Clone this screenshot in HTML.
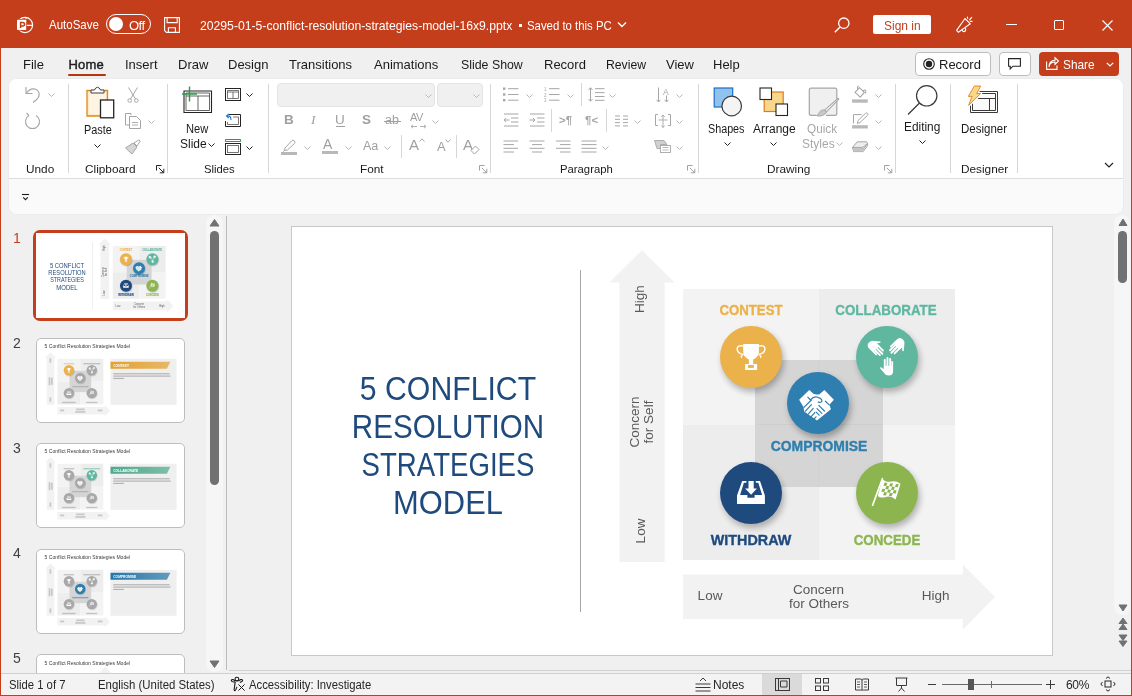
<!DOCTYPE html>
<html><head><meta charset="utf-8">
<style>
*{box-sizing:border-box}
html,body{margin:0;padding:0}
body{width:1132px;height:696px;overflow:hidden;position:relative;background:#F0F0F0;font-family:"Liberation Sans",sans-serif;color:#242424}
.a{position:absolute}
.t{position:absolute;white-space:nowrap;line-height:1}
svg{position:absolute;overflow:visible}
#root{position:absolute;left:0;top:0;width:1132px;height:696px;will-change:transform}
</style></head><body><div id="root">
<!-- TITLE BAR -->
<div class="a" style="left:0;top:0;width:1132px;height:48px;background:#C43E1C"></div>
<div class="a" style="left:0;top:48px;width:1px;height:648px;background:#C43E1C"></div>
<div class="a" style="left:1131px;top:48px;width:1px;height:648px;background:#C43E1C"></div>
<div class="a" style="left:0;top:695px;width:1132px;height:1px;background:#C43E1C"></div>
<!-- ppt logo -->
<svg style="left:12px;top:12px" width="26" height="26" viewBox="0 0 26 26"><circle cx="13" cy="13" r="7.6" fill="none" stroke="#fff" stroke-width="1.2"/><path d="M14 5.4 V13.4 H20.6" fill="none" stroke="#fff" stroke-width="1.2"/><rect x="4.3" y="7" width="10.6" height="11.6" fill="#C43E1C"/><rect x="5" y="7.7" width="9.2" height="10.2" rx="0.6" fill="#fff"/><path d="M8.6 15.9 V10.5 H10.6 Q12.6 10.5 12.6 12.3 Q12.6 14 10.6 14 H8.6" fill="none" stroke="#C43E1C" stroke-width="1.5"/></svg>
<div class="t" style="left:49px;top:18px;font-size:13px;color:#fff;transform:scaleX(0.885);transform-origin:0 0">AutoSave</div>
<div class="a" style="left:106px;top:14px;width:45px;height:20px;border:1.3px solid #fff;border-radius:10px"></div>
<div class="a" style="left:109px;top:17px;width:14px;height:14px;background:#fff;border-radius:50%"></div>
<div class="t" style="left:129px;top:18.5px;font-size:13px;color:#fff;letter-spacing:-0.5px">Off</div>
<svg style="left:164px;top:17px" width="16" height="16" viewBox="0 0 16 16"><path d="M0.6 0.6 H15.4 V15.4 H2.4 L0.6 13.6 Z" fill="none" stroke="#fff" stroke-width="1.1"/><path d="M3.1 0.6 V5.6 H13.2 V0.6 M4.4 15.4 V10.8 H11.4 V15.4" fill="none" stroke="#fff" stroke-width="1.1"/></svg>
<div class="t" style="left:200px;top:19.8px;font-size:12.2px;color:#fff">20295-01-5-conflict-resolution-strategies-model-16x9.pptx</div>
<div class="a" style="left:519px;top:24px;width:3px;height:3px;background:#fff"></div>
<div class="t" style="left:527px;top:19px;font-size:13px;color:#fff;transform:scaleX(0.875);transform-origin:0 0">Saved to this PC</div>
<svg style="left:617px;top:21px" width="10" height="7" viewBox="0 0 10 7"><path d="M1 1.5 L5 5.5 L9 1.5" fill="none" stroke="#fff" stroke-width="1.4"/></svg>
<!-- search -->
<svg style="left:834px;top:17px" width="16" height="16" viewBox="0 0 16 16"><circle cx="9.8" cy="6.2" r="5.2" fill="none" stroke="#fff" stroke-width="1.3"/><path d="M6.1 9.9 L0.8 15.2" stroke="#fff" stroke-width="1.4"/></svg>
<div class="a" style="left:873px;top:15px;width:58px;height:19px;background:#fff;border-radius:2px"></div>
<div class="t" style="left:884px;top:19px;font-size:13px;color:#C43E1C;transform:scaleX(0.92);transform-origin:0 0">Sign in</div>
<!-- megaphone/pen -->
<svg style="left:950px;top:10px" width="30" height="30" viewBox="0 0 30 30"><path d="M6.6 20.4 L15 8.5 L20.3 13.8 L8.4 22.3 Z" fill="none" stroke="#fff" stroke-width="1.1" stroke-linejoin="round"/><path d="M12.3 19.6 Q12.6 22.2 14.6 21.4 Q16.2 20.6 15.6 18" fill="none" stroke="#fff" stroke-width="1.1"/><path d="M17.4 7 L17.7 8.5 M19.6 9.8 L21.7 7.4 M20.4 11.4 L22 11.4" stroke="#fff" stroke-width="1.1" stroke-linecap="round"/></svg>
<div class="a" style="left:1006px;top:24px;width:11px;height:1px;background:#fff"></div>
<div class="a" style="left:1054px;top:20px;width:10px;height:10px;border:1px solid #fff;border-radius:1px"></div>
<svg style="left:1102px;top:20px" width="11" height="11" viewBox="0 0 11 11"><path d="M0.5 0.5 L10.5 10.5 M10.5 0.5 L0.5 10.5" stroke="#fff" stroke-width="1.1"/></svg>

<!-- TABS -->
<div class="t" style="left:23px;top:58px;font-size:13px;color:#1A1A1A">File</div>
<div class="t" style="left:68.5px;top:58px;font-size:13px;color:#1A1A1A;font-weight:400;-webkit-text-stroke:0.45px #242424;letter-spacing:0.15px">Home</div>
<div class="a" style="left:68px;top:74px;width:38px;height:2.2px;background:#B8360F;border-radius:1px"></div>
<div class="t" style="left:125px;top:58px;font-size:13px;color:#1A1A1A">Insert</div>
<div class="t" style="left:178px;top:58px;font-size:13px;color:#1A1A1A">Draw</div>
<div class="t" style="left:228px;top:58px;font-size:13px;color:#1A1A1A">Design</div>
<div class="t" style="left:289px;top:58px;font-size:13px;color:#1A1A1A">Transitions</div>
<div class="t" style="left:374px;top:58px;font-size:13px;color:#1A1A1A">Animations</div>
<div class="t" style="left:461px;top:58px;font-size:13px;color:#1A1A1A;transform:scaleX(0.95);transform-origin:0 0">Slide Show</div>
<div class="t" style="left:544px;top:58px;font-size:13px;color:#1A1A1A">Record</div>
<div class="t" style="left:606px;top:58px;font-size:13px;color:#1A1A1A;transform:scaleX(0.94);transform-origin:0 0">Review</div>
<div class="t" style="left:666px;top:58px;font-size:13px;color:#1A1A1A">View</div>
<div class="t" style="left:713px;top:58px;font-size:13px;color:#1A1A1A">Help</div>
<!-- record / comment / share -->
<div class="a" style="left:915px;top:52px;width:76px;height:24px;background:#fff;border:1px solid #BDBDBD;border-radius:4px"></div>
<svg style="left:923px;top:58px" width="12" height="12" viewBox="0 0 12 12"><circle cx="6" cy="6" r="5.3" fill="none" stroke="#242424" stroke-width="1.1"/><circle cx="6" cy="6" r="3.2" fill="#242424"/></svg>
<div class="t" style="left:939px;top:58px;font-size:13px;color:#1A1A1A">Record</div>
<div class="a" style="left:999px;top:52px;width:32px;height:24px;background:#fff;border:1px solid #BDBDBD;border-radius:4px"></div>
<svg style="left:1008px;top:58px" width="13" height="12" viewBox="0 0 13 12"><path d="M0.6 0.6 H12.4 V8.2 H5 L2.2 11 V8.2 H0.6 Z" fill="none" stroke="#242424" stroke-width="1.1"/></svg>
<div class="a" style="left:1039px;top:52px;width:80px;height:24px;background:#C43E1C;border-radius:4px"></div>
<svg style="left:1046px;top:57px" width="13" height="13" viewBox="0 0 13 13"><path d="M0.6 4.5 V12.4 H11 V8.5" fill="none" stroke="#fff" stroke-width="1.1"/><path d="M3 10 Q3.5 5 9 5 V7.5 L12.5 4 L9 0.8 V3.2 Q3 3.5 3 10Z" fill="none" stroke="#fff" stroke-width="1.1"/></svg>
<div class="t" style="left:1063px;top:58px;font-size:13px;color:#fff;transform:scaleX(0.91);transform-origin:0 0">Share</div>
<svg style="left:1106px;top:62px" width="8" height="5" viewBox="0 0 8 5"><path d="M0.8 0.8 L4 4 L7.2 0.8" fill="none" stroke="#fff" stroke-width="1.2"/></svg>
<!-- RIBBON CARD -->
<div class="a" style="left:9px;top:79px;width:1114px;height:135px;background:#FAFAFA;border-radius:8px;box-shadow:0 0 0 0.5px rgba(0,0,0,0.04)"></div>
<div class="a" style="left:9px;top:79px;width:1114px;height:100px;background:#FFFFFF;border-radius:8px 8px 0 0;border-bottom:1px solid #DCDCDC"></div>
<!-- separators -->
<div class="a" style="left:68px;top:84px;width:1px;height:89px;background:#D6D6D6"></div>
<div class="a" style="left:167px;top:84px;width:1px;height:89px;background:#D6D6D6"></div>
<div class="a" style="left:268px;top:84px;width:1px;height:89px;background:#D6D6D6"></div>
<div class="a" style="left:490px;top:84px;width:1px;height:89px;background:#D6D6D6"></div>
<div class="a" style="left:698px;top:84px;width:1px;height:89px;background:#D6D6D6"></div>
<div class="a" style="left:895px;top:84px;width:1px;height:89px;background:#D6D6D6"></div>
<div class="a" style="left:950px;top:84px;width:1px;height:89px;background:#D6D6D6"></div>
<div class="a" style="left:1017px;top:84px;width:1px;height:89px;background:#D6D6D6"></div>
<!-- small seps -->
<div class="a" style="left:401px;top:135px;width:1px;height:23px;background:#D6D6D6"></div>
<div class="a" style="left:456px;top:135px;width:1px;height:23px;background:#D6D6D6"></div>
<div class="a" style="left:581px;top:83px;width:1px;height:23px;background:#D6D6D6"></div>
<div class="a" style="left:551px;top:109px;width:1px;height:23px;background:#D6D6D6"></div>
<div class="a" style="left:606px;top:109px;width:1px;height:23px;background:#D6D6D6"></div>
<!-- group labels -->
<div class="t" style="left:26px;top:164px;font-size:11.8px;color:#1A1A1A">Undo</div>
<div class="t" style="left:85px;top:164px;font-size:11.8px;color:#1A1A1A">Clipboard</div>
<div class="t" style="left:204px;top:164px;font-size:11.3px;color:#1A1A1A">Slides</div>
<div class="t" style="left:360px;top:164px;font-size:11.8px;color:#1A1A1A">Font</div>
<div class="t" style="left:560px;top:164px;font-size:11.3px;color:#1A1A1A">Paragraph</div>
<div class="t" style="left:767px;top:164px;font-size:11.8px;color:#1A1A1A">Drawing</div>
<div class="t" style="left:961px;top:164px;font-size:11.8px;color:#1A1A1A">Designer</div>
<!-- launchers -->
<svg style="left:156px;top:165px" width="9" height="8" viewBox="0 0 9 8"><path d="M0.5 5.5 V0.5 H5.5" fill="none" stroke="#242424" stroke-width="1"/><path d="M2.8 2.8 L7.8 7.8 M7.8 3.8 V7.8 H3.8" fill="none" stroke="#242424" stroke-width="1"/></svg>
<svg style="left:479px;top:165px" width="9" height="8" viewBox="0 0 9 8"><path d="M0.5 5.5 V0.5 H5.5" fill="none" stroke="#A0A0A0" stroke-width="1"/><path d="M2.8 2.8 L7.8 7.8 M7.8 3.8 V7.8 H3.8" fill="none" stroke="#A0A0A0" stroke-width="1"/></svg>
<svg style="left:687px;top:165px" width="9" height="8" viewBox="0 0 9 8"><path d="M0.5 5.5 V0.5 H5.5" fill="none" stroke="#A0A0A0" stroke-width="1"/><path d="M2.8 2.8 L7.8 7.8 M7.8 3.8 V7.8 H3.8" fill="none" stroke="#A0A0A0" stroke-width="1"/></svg>
<svg style="left:884px;top:165px" width="9" height="8" viewBox="0 0 9 8"><path d="M0.5 5.5 V0.5 H5.5" fill="none" stroke="#A0A0A0" stroke-width="1"/><path d="M2.8 2.8 L7.8 7.8 M7.8 3.8 V7.8 H3.8" fill="none" stroke="#A0A0A0" stroke-width="1"/></svg>

<!-- UNDO group -->
<svg style="left:25px;top:86px" width="16" height="17" viewBox="0 0 16 17"><path d="M1 1 V7.5 H7.5" fill="none" stroke="#A6A6A6" stroke-width="1.1"/><path d="M1.5 7 Q5 2 10 3 Q15 5 14 10 Q13 13 8 16.5" fill="none" stroke="#A6A6A6" stroke-width="1.1"/></svg>
<svg style="left:48px;top:93px" width="7" height="4" viewBox="0 0 7 4"><path d="M0.5 0.5 L3.5 3.5 L6.5 0.5" fill="none" stroke="#B0B0B0" stroke-width="0.9"/></svg>
<svg style="left:24px;top:112px" width="17" height="17" viewBox="0 0 17 17"><path d="M5 3.5 A7 7 0 1 0 12 3.5" fill="none" stroke="#A6A6A6" stroke-width="1.1"/><path d="M5 3.5 L2.5 1" fill="none" stroke="#A6A6A6" stroke-width="1.1"/></svg>

<!-- CLIPBOARD group -->
<svg style="left:86px;top:87px" width="29" height="32" viewBox="0 0 29 32"><path d="M1 3.5 H21.5 V29 H1 Z" fill="#FBE3B8" stroke="#E08A1E" stroke-width="1.3"/><path d="M2.5 5 H20 V27.5 H2.5 Z" fill="#FFFFFF" opacity="0.6"/><path d="M5 6 V3 H8.5 Q9.5 0.3 11.5 0.3 Q13.5 0.3 14.5 3 H18 V6 Z" fill="#fff" stroke="#424242" stroke-width="1"/><rect x="14.5" y="13" width="13.2" height="17.8" fill="#fff" stroke="#242424" stroke-width="1.3"/></svg>
<div class="t" style="left:84px;top:124px;font-size:12.5px;color:#1A1A1A;transform:scaleX(0.87);transform-origin:0 0">Paste</div>
<svg style="left:94px;top:144px" width="7" height="4" viewBox="0 0 7 4"><path d="M0.5 0.5 L3.5 3.5 L6.5 0.5" fill="none" stroke="#242424" stroke-width="1"/></svg>
<svg style="left:127px;top:87px" width="12" height="16" viewBox="0 0 12 16"><path d="M1.5 0.5 L8.5 12 M10.5 0.5 L3.5 12" stroke="#A6A6A6" stroke-width="1"/><circle cx="2.7" cy="13.5" r="1.8" fill="none" stroke="#A6A6A6" stroke-width="1"/><circle cx="9.3" cy="13.5" r="1.8" fill="none" stroke="#A6A6A6" stroke-width="1"/></svg>
<svg style="left:125px;top:113px" width="17" height="17" viewBox="0 0 17 17"><path d="M6 2 V0.5 H0.5 V12 H4.5" fill="none" stroke="#A6A6A6" stroke-width="1"/><path d="M4.5 3.5 H11.5 L15.5 7.5 V15.5 H4.5 Z" fill="none" stroke="#A6A6A6" stroke-width="1"/><path d="M7 9.5 H13 M7 12 H13" stroke="#A6A6A6" stroke-width="0.9"/></svg>
<svg style="left:148px;top:120px" width="7" height="4" viewBox="0 0 7 4"><path d="M0.5 0.5 L3.5 3.5 L6.5 0.5" fill="none" stroke="#B0B0B0" stroke-width="0.9"/></svg>
<svg style="left:125px;top:139px" width="16" height="16" viewBox="0 0 16 16"><path d="M9 4 L14 0.8 L15.3 2 L12 7 Z" fill="none" stroke="#A6A6A6" stroke-width="1"/><path d="M8 4 L12 8 L7 15 L0.5 9 Z" fill="#D6D6D6" stroke="#A6A6A6" stroke-width="1"/></svg>

<!-- SLIDES group -->
<svg style="left:181px;top:86px" width="32" height="28" viewBox="0 0 32 28"><path d="M3 5 H30.5 V26.5 H3 Z" fill="none" stroke="#242424" stroke-width="1.1"/><path d="M5 7 H28.5 V24.5 H5 Z" fill="none" stroke="#555" stroke-width="0.9"/><path d="M5 10 H28.5 M17 10 V24.5" stroke="#555" stroke-width="0.9"/><path d="M8.5 0.5 V15.5 M1 8 H16" stroke="#2B9A4A" stroke-width="1.4"/></svg>
<div class="t" style="left:186px;top:123px;font-size:12.5px;color:#1A1A1A;transform:scaleX(0.89);transform-origin:0 0">New</div>
<div class="t" style="left:180px;top:138px;font-size:12.5px;color:#1A1A1A;transform:scaleX(0.96);transform-origin:0 0">Slide</div>
<svg style="left:208px;top:143px" width="7" height="4" viewBox="0 0 7 4"><path d="M0.5 0.5 L3.5 3.5 L6.5 0.5" fill="none" stroke="#242424" stroke-width="1"/></svg>
<svg style="left:225px;top:88px" width="16" height="13" viewBox="0 0 16 13"><rect x="0.5" y="0.5" width="15" height="12" fill="none" stroke="#242424" stroke-width="1"/><path d="M2.5 4 H13.5 M8 4 V10.5 M2.5 2.5 H13.5 V10.5 H2.5 Z" fill="none" stroke="#555" stroke-width="0.8"/></svg>
<svg style="left:246px;top:93px" width="7" height="4" viewBox="0 0 7 4"><path d="M0.5 0.5 L3.5 3.5 L6.5 0.5" fill="none" stroke="#242424" stroke-width="1"/></svg>
<svg style="left:225px;top:113px" width="16" height="14" viewBox="0 0 16 14"><path d="M4 1.5 H15.5 V13.5 H0.5 V8" fill="none" stroke="#242424" stroke-width="1"/><path d="M8 4 H13.5 V11.5 H2.5 V9" fill="none" stroke="#555" stroke-width="0.8"/><path d="M6 7 Q6 2 2 3 M3.8 1 L1.5 3 L3.8 5" fill="none" stroke="#1F7BD0" stroke-width="1.1"/></svg>
<svg style="left:225px;top:139px" width="16" height="16" viewBox="0 0 16 16"><path d="M0.5 0.5 H15.5 V2.5 H0.5 Z" fill="#fff" stroke="#2B9A4A" stroke-width="1"/><rect x="0.5" y="4.5" width="15" height="11" fill="none" stroke="#242424" stroke-width="1"/><rect x="2.5" y="6.5" width="11" height="7" fill="none" stroke="#555" stroke-width="0.8"/></svg>
<svg style="left:246px;top:146px" width="7" height="4" viewBox="0 0 7 4"><path d="M0.5 0.5 L3.5 3.5 L6.5 0.5" fill="none" stroke="#242424" stroke-width="1"/></svg>
<!-- FONT group -->
<div class="a" style="left:277px;top:83px;width:158px;height:24px;background:#F0F0F0;border:1px solid #E3E3E3;border-radius:4px"></div>
<svg style="left:425px;top:94px" width="7" height="4" viewBox="0 0 7 4"><path d="M0.5 0.5 L3.5 3.5 L6.5 0.5" fill="none" stroke="#B0B0B0" stroke-width="0.9"/></svg>
<div class="a" style="left:437px;top:83px;width:46px;height:24px;background:#F0F0F0;border:1px solid #E3E3E3;border-radius:4px"></div>
<svg style="left:473px;top:94px" width="7" height="4" viewBox="0 0 7 4"><path d="M0.5 0.5 L3.5 3.5 L6.5 0.5" fill="none" stroke="#B0B0B0" stroke-width="0.9"/></svg>
<div class="t" style="left:284px;top:113px;font-size:13.5px;color:#A0A0A0;font-weight:700">B</div>
<div class="t" style="left:311px;top:113px;font-size:13.5px;color:#A0A0A0;font-family:'Liberation Serif';font-style:italic">I</div>
<div class="t" style="left:335px;top:113px;font-size:13.5px;color:#A0A0A0">U</div>
<div class="a" style="left:336px;top:126px;width:9px;height:1px;background:#A0A0A0"></div>
<div class="t" style="left:362px;top:113px;font-size:13.5px;color:#A0A0A0;font-weight:700">S</div>
<div class="t" style="left:385px;top:114px;font-size:12.5px;color:#A0A0A0">ab</div>
<div class="a" style="left:384px;top:121px;width:17px;height:1px;background:#A0A0A0"></div>
<div class="t" style="left:410px;top:112px;font-size:11px;color:#A0A0A0;letter-spacing:-0.5px">AV</div>
<svg style="left:410px;top:124px" width="17" height="5" viewBox="0 0 17 5"><path d="M1 2.5 H7 M1 2.5 L3 0.8 M1 2.5 L3 4.2 M10 2.5 H16 M16 2.5 L14 0.8 M16 2.5 L14 4.2" fill="none" stroke="#A0A0A0" stroke-width="0.8"/></svg>
<svg style="left:432px;top:120px" width="7" height="4" viewBox="0 0 7 4"><path d="M0.5 0.5 L3.5 3.5 L6.5 0.5" fill="none" stroke="#B0B0B0" stroke-width="0.9"/></svg>
<svg style="left:281px;top:138px" width="16" height="17" viewBox="0 0 16 17"><path d="M4 10 L11 2.5 Q12 1.5 13.5 3 Q14.5 4.5 13.5 5.5 L6.5 12 L3.5 12.5 Z" fill="none" stroke="#A8A8A8" stroke-width="1"/><path d="M3.5 12.5 L2 13.5" stroke="#A8A8A8" stroke-width="1"/><rect x="0" y="14" width="16" height="3" fill="#B8B8B8"/></svg>
<svg style="left:304px;top:146px" width="7" height="4" viewBox="0 0 7 4"><path d="M0.5 0.5 L3.5 3.5 L6.5 0.5" fill="none" stroke="#B0B0B0" stroke-width="0.9"/></svg>
<div class="t" style="left:323px;top:137px;font-size:14px;color:#A0A0A0">A</div>
<div class="a" style="left:322px;top:151px;width:16px;height:3px;background:#B8B8B8"></div>
<svg style="left:345px;top:146px" width="7" height="4" viewBox="0 0 7 4"><path d="M0.5 0.5 L3.5 3.5 L6.5 0.5" fill="none" stroke="#B0B0B0" stroke-width="0.9"/></svg>
<div class="t" style="left:363px;top:140px;font-size:12.5px;color:#A0A0A0">Aa</div>
<svg style="left:384px;top:146px" width="7" height="4" viewBox="0 0 7 4"><path d="M0.5 0.5 L3.5 3.5 L6.5 0.5" fill="none" stroke="#B0B0B0" stroke-width="0.9"/></svg>
<div class="t" style="left:409px;top:137px;font-size:15px;color:#A0A0A0">A</div>
<svg style="left:419px;top:138px" width="6" height="4" viewBox="0 0 6 4"><path d="M0.5 3.5 L3 0.8 L5.5 3.5" fill="none" stroke="#A0A0A0" stroke-width="0.9"/></svg>
<div class="t" style="left:437px;top:139.5px;font-size:13px;color:#A0A0A0">A</div>
<svg style="left:445px;top:139px" width="6" height="4" viewBox="0 0 6 4"><path d="M0.5 0.5 L3 3.2 L5.5 0.5" fill="none" stroke="#A0A0A0" stroke-width="0.9"/></svg>
<div class="t" style="left:463px;top:137px;font-size:15px;color:#A0A0A0">A</div>
<svg style="left:470px;top:145px" width="10" height="10" viewBox="0 0 10 10"><path d="M1 5.5 L5.5 1 L9 4.5 L4.5 9 Z" fill="#fff" stroke="#A0A0A0" stroke-width="1"/></svg>

<!-- PARAGRAPH group -->
<svg style="left:503px;top:87px" width="16" height="15" viewBox="0 0 16 15"><rect x="0" y="0.5" width="2.4" height="2.4" fill="#A6A6A6"/><rect x="0" y="6.3" width="2.4" height="2.4" fill="#A6A6A6"/><rect x="0" y="12" width="2.4" height="2.4" fill="#A6A6A6"/><path d="M5 1.7 H15.5 M5 7.5 H15.5 M5 13.2 H15.5" stroke="#A6A6A6" stroke-width="1"/></svg>
<svg style="left:526px;top:94px" width="7" height="4" viewBox="0 0 7 4"><path d="M0.5 0.5 L3.5 3.5 L6.5 0.5" fill="none" stroke="#B0B0B0" stroke-width="0.9"/></svg>
<svg style="left:544px;top:87px" width="16" height="15" viewBox="0 0 16 15"><text x="0" y="4" font-size="4.5" fill="#A6A6A6" font-family="Liberation Sans">1</text><text x="0" y="9.5" font-size="4.5" fill="#A6A6A6" font-family="Liberation Sans">2</text><text x="0" y="15" font-size="4.5" fill="#A6A6A6" font-family="Liberation Sans">3</text><path d="M5 1.7 H15.5 M5 7.5 H15.5 M5 13.2 H15.5" stroke="#A6A6A6" stroke-width="1"/></svg>
<svg style="left:567px;top:94px" width="7" height="4" viewBox="0 0 7 4"><path d="M0.5 0.5 L3.5 3.5 L6.5 0.5" fill="none" stroke="#B0B0B0" stroke-width="0.9"/></svg>
<svg style="left:588px;top:87px" width="17" height="15" viewBox="0 0 17 15"><path d="M2.5 0.8 V14.2 M0.5 3 L2.5 0.8 L4.5 3 M0.5 12 L2.5 14.2 L4.5 12" fill="none" stroke="#A6A6A6" stroke-width="1"/><path d="M7 1.7 H16.5 M7 5.6 H16.5 M7 9.5 H16.5 M7 13.3 H16.5" stroke="#A6A6A6" stroke-width="1"/></svg>
<svg style="left:609px;top:94px" width="7" height="4" viewBox="0 0 7 4"><path d="M0.5 0.5 L3.5 3.5 L6.5 0.5" fill="none" stroke="#B0B0B0" stroke-width="0.9"/></svg>
<svg style="left:656px;top:87px" width="15" height="16" viewBox="0 0 15 16"><path d="M2.5 0.5 V15 M0.5 12.8 L2.5 15 L4.5 12.8 M10.5 8.5 V15 M8.5 12.8 L10.5 15 L12.5 12.8" fill="none" stroke="#A6A6A6" stroke-width="1"/><text x="7" y="8" font-size="8.5" fill="#A6A6A6" font-family="Liberation Sans">A</text></svg>
<svg style="left:676px;top:94px" width="7" height="4" viewBox="0 0 7 4"><path d="M0.5 0.5 L3.5 3.5 L6.5 0.5" fill="none" stroke="#B0B0B0" stroke-width="0.9"/></svg>
<!-- row2 -->
<svg style="left:503px;top:113px" width="16" height="14" viewBox="0 0 16 14"><path d="M1 1 H15.5 M8 5 H15.5 M8 9 H15.5 M1 13 H15.5 M6.5 7 H1 M1 7 L3 5 M1 7 L3 9" fill="none" stroke="#A6A6A6" stroke-width="1"/></svg>
<svg style="left:529px;top:113px" width="16" height="14" viewBox="0 0 16 14"><path d="M1 1 H15.5 M8 5 H15.5 M8 9 H15.5 M1 13 H15.5 M0.5 7 H6 M6 7 L4 5 M6 7 L4 9" fill="none" stroke="#A6A6A6" stroke-width="1"/></svg>
<div class="t" style="left:559px;top:115px;font-size:11.5px;color:#A6A6A6;font-weight:700">&gt;¶</div>
<div class="t" style="left:585px;top:115px;font-size:11.5px;color:#A6A6A6;font-weight:700">¶&lt;</div>
<svg style="left:615px;top:115px" width="13" height="12" viewBox="0 0 13 12"><path d="M0 1 H5 M0 4.3 H5 M0 7.6 H5 M0 10.9 H5 M8 1 H13 M8 4.3 H13 M8 7.6 H13 M8 10.9 H13" stroke="#A6A6A6" stroke-width="1"/></svg>
<svg style="left:634px;top:120px" width="7" height="4" viewBox="0 0 7 4"><path d="M0.5 0.5 L3.5 3.5 L6.5 0.5" fill="none" stroke="#B0B0B0" stroke-width="0.9"/></svg>
<svg style="left:655px;top:114px" width="16" height="14" viewBox="0 0 16 14"><path d="M3 0.5 H0.5 V11.5 H3 M13 0.5 H15.5 V11.5 H13" fill="none" stroke="#A6A6A6" stroke-width="1"/><path d="M3.5 6 H12.5 M8 1 V13.5 M6.3 3 L8 1 L9.7 3 M6.3 11.5 L8 13.5 L9.7 11.5" fill="none" stroke="#A6A6A6" stroke-width="0.9"/></svg>
<svg style="left:676px;top:120px" width="7" height="4" viewBox="0 0 7 4"><path d="M0.5 0.5 L3.5 3.5 L6.5 0.5" fill="none" stroke="#B0B0B0" stroke-width="0.9"/></svg>
<!-- row3 -->
<svg style="left:503px;top:140px" width="16" height="13" viewBox="0 0 16 13"><path d="M0.5 1 H15 M0.5 4.6 H11 M0.5 8.3 H15 M0.5 12 H11" stroke="#A6A6A6" stroke-width="1"/></svg>
<svg style="left:529px;top:140px" width="16" height="13" viewBox="0 0 16 13"><path d="M0.5 1 H15.5 M3 4.6 H13 M0.5 8.3 H15.5 M3 12 H13" stroke="#A6A6A6" stroke-width="1"/></svg>
<svg style="left:555px;top:140px" width="16" height="13" viewBox="0 0 16 13"><path d="M1 1 H15.5 M5 4.6 H15.5 M1 8.3 H15.5 M5 12 H15.5" stroke="#A6A6A6" stroke-width="1"/></svg>
<svg style="left:581px;top:140px" width="16" height="13" viewBox="0 0 16 13"><path d="M0.5 1 H15.5 M0.5 4.6 H15.5 M0.5 8.3 H15.5 M0.5 12 H15.5" stroke="#A6A6A6" stroke-width="1"/></svg>
<svg style="left:602px;top:146px" width="7" height="4" viewBox="0 0 7 4"><path d="M0.5 0.5 L3.5 3.5 L6.5 0.5" fill="none" stroke="#B0B0B0" stroke-width="0.9"/></svg>
<svg style="left:654px;top:140px" width="17" height="13" viewBox="0 0 17 13"><path d="M0.5 0.5 H10 L13 4.5 H6.5 V8.5 H3 Z" fill="#D0D0D0" stroke="#A6A6A6" stroke-width="0.9"/><rect x="6.5" y="5.5" width="10" height="7" fill="#fff" stroke="#A6A6A6" stroke-width="0.9"/><path d="M8.5 7.5 H14.5 M8.5 10 H14.5" stroke="#A6A6A6" stroke-width="0.8"/></svg>
<svg style="left:676px;top:146px" width="7" height="4" viewBox="0 0 7 4"><path d="M0.5 0.5 L3.5 3.5 L6.5 0.5" fill="none" stroke="#B0B0B0" stroke-width="0.9"/></svg>

<!-- DRAWING group -->
<svg style="left:713px;top:87px" width="30" height="30" viewBox="0 0 30 30"><rect x="1.2" y="1" width="18.5" height="19" fill="#8FC3EE" stroke="#1C6FC8" stroke-width="1.2"/><circle cx="18.7" cy="19" r="9.8" fill="#F4F4F4" stroke="#3A3A3A" stroke-width="1.2"/></svg>
<div class="t" style="left:708px;top:123px;font-size:12.5px;color:#1A1A1A;transform:scaleX(0.86);transform-origin:0 0">Shapes</div>
<svg style="left:724px;top:142px" width="7" height="4" viewBox="0 0 7 4"><path d="M0.5 0.5 L3.5 3.5 L6.5 0.5" fill="none" stroke="#242424" stroke-width="1"/></svg>
<svg style="left:759px;top:87px" width="30" height="30" viewBox="0 0 30 30"><rect x="5.2" y="5" width="19" height="19.5" fill="#F8D78D" stroke="#E07B1A" stroke-width="1.2"/><rect x="1" y="1" width="11.5" height="11.5" fill="#fff" stroke="#242424" stroke-width="1.1"/><rect x="17" y="17" width="11.5" height="11.5" fill="#fff" stroke="#242424" stroke-width="1.1"/></svg>
<div class="t" style="left:753px;top:123px;font-size:12.5px;color:#1A1A1A;transform:scaleX(0.96);transform-origin:0 0">Arrange</div>
<svg style="left:770px;top:142px" width="7" height="4" viewBox="0 0 7 4"><path d="M0.5 0.5 L3.5 3.5 L6.5 0.5" fill="none" stroke="#242424" stroke-width="1"/></svg>

<svg style="left:800px;top:80px" width="90" height="80" viewBox="800 80 90 80">
<path d="M816 115.4 H811.2 Q809.3 115.4 809.3 113.5 V90.1 Q809.3 88.2 811.2 88.2 H834.9 Q836.8 88.2 836.8 90.1 V113.5 Q836.8 115.4 834.9 115.4 H826" fill="#F0F0F0" stroke="#A6A6A6" stroke-width="1.2"/>
<path d="M837.6 98.6 Q839 97.8 838.6 99.4 L826.4 111.8 L824.6 110.2 Z" fill="#fff" stroke="#A6A6A6" stroke-width="1.1" stroke-linejoin="round"/>
<path d="M825.6 110.6 Q821 108.6 818.8 113.4 Q818 115 816.4 115.6 Q822 117.4 826.4 112.6 Z" fill="#C8C8C8" stroke="#A6A6A6" stroke-width="1"/>
<path d="M855 92.4 L859.4 87.6 L864.4 92.4 L860.2 97.2 Z" fill="#fff" stroke="#A6A6A6" stroke-width="1.1" stroke-linejoin="round"/>
<path d="M857.6 89.4 V86.8 Q857.6 85.6 858.8 86.2" fill="none" stroke="#A6A6A6" stroke-width="1"/>
<path d="M863.2 91 Q866 88 865.8 93.6" fill="none" stroke="#A6A6A6" stroke-width="1.1"/>
<rect x="852.1" y="99.4" width="15.7" height="3.3" fill="#B8B8B8"/>
<path d="M853.5 123.4 V114.6 H861.6" fill="none" stroke="#A6A6A6" stroke-width="1"/>
<path d="M857.4 123.4 L858 120.6 L865.4 113.4 Q866.8 112.4 867.6 113.4 Q868.4 114.4 867.4 115.4 L860 122.6 Z" fill="#fff" stroke="#A6A6A6" stroke-width="1" stroke-linejoin="round"/>
<rect x="852.1" y="125.2" width="15.7" height="3.3" fill="#B8B8B8"/>
<path d="M852.6 147.4 L857.2 141.8 H866.6 L867.6 143.6 L863.2 149.6 H853.6 Z" fill="#EDEDED" stroke="#A6A6A6" stroke-width="1" stroke-linejoin="round"/>
<path d="M852.6 147.4 H862.6 L867.6 143.6 M862.6 147.4 L863.2 149.6 M852.6 147.4 L853.6 151.6 H863.2 L867.6 145.6 V143.6" fill="none" stroke="#A6A6A6" stroke-width="1" stroke-linejoin="round"/>
<path d="M853 148 H862.6 L863.2 151.4 H853.6 Z" fill="#C4C4C4"/>
</svg>
<div class="t" style="left:807px;top:123px;font-size:12.5px;color:#A8A8A8;transform:scaleX(0.94);transform-origin:0 0">Quick</div>
<div class="t" style="left:802px;top:138px;font-size:12.5px;color:#A8A8A8;transform:scaleX(0.96);transform-origin:0 0">Styles</div>
<svg style="left:836px;top:142px" width="7" height="4" viewBox="0 0 7 4"><path d="M0.5 0.5 L3.5 3.5 L6.5 0.5" fill="none" stroke="#B0B0B0" stroke-width="0.9"/></svg>

<svg style="left:875px;top:94px" width="7" height="4" viewBox="0 0 7 4"><path d="M0.5 0.5 L3.5 3.5 L6.5 0.5" fill="none" stroke="#B0B0B0" stroke-width="0.9"/></svg>

<svg style="left:875px;top:120px" width="7" height="4" viewBox="0 0 7 4"><path d="M0.5 0.5 L3.5 3.5 L6.5 0.5" fill="none" stroke="#B0B0B0" stroke-width="0.9"/></svg>

<svg style="left:875px;top:146px" width="7" height="4" viewBox="0 0 7 4"><path d="M0.5 0.5 L3.5 3.5 L6.5 0.5" fill="none" stroke="#B0B0B0" stroke-width="0.9"/></svg>

<!-- EDITING -->
<svg style="left:907px;top:85px" width="31" height="31" viewBox="0 0 31 31"><circle cx="19.7" cy="10.8" r="10.2" fill="#fff" stroke="#3A3A3A" stroke-width="1.2"/><path d="M12.5 18 L1 29.5" stroke="#3A3A3A" stroke-width="1.2"/></svg>
<div class="t" style="left:904px;top:121px;font-size:12.5px;color:#1A1A1A;transform:scaleX(0.95);transform-origin:0 0">Editing</div>
<svg style="left:919px;top:140px" width="7" height="4" viewBox="0 0 7 4"><path d="M0.5 0.5 L3.5 3.5 L6.5 0.5" fill="none" stroke="#242424" stroke-width="1"/></svg>

<!-- DESIGNER -->
<svg style="left:960px;top:80px" width="45" height="40" viewBox="0 0 45 40"><path d="M10.5 11.5 H37.5 V32.5 H10.5 Z" fill="none" stroke="#3A3A3A" stroke-width="1"/><path d="M12.5 13.5 H35.5 V30.5 H12.5 Z M12.5 18.5 H35.5 M29.5 18.5 V30.5" fill="#FAFAFA" stroke="#3A3A3A" stroke-width="1"/><path d="M14.4 6 H20.7 L16.7 13.5 H20.7 L8.6 25.3 L12.1 16.4 H8.3 Z" fill="#fff" stroke="#fff" stroke-width="3.2" stroke-linejoin="round"/><path d="M14.4 6 H20.7 L16.7 13.5 H20.7 L8.6 25.3 L12.1 16.4 H8.3 Z" fill="#F8D98A" stroke="#E8801E" stroke-width="0.9" stroke-linejoin="round"/></svg>
<div class="t" style="left:961px;top:123px;font-size:12.5px;color:#1A1A1A;transform:scaleX(0.92);transform-origin:0 0">Designer</div>
<svg style="left:1104px;top:162px" width="10" height="6" viewBox="0 0 10 6"><path d="M1 1 L5 5 L9 1" fill="none" stroke="#242424" stroke-width="1.2"/></svg>

<!-- QAT -->
<svg style="left:15px;top:185px" width="20" height="20" viewBox="0 0 20 20"><path d="M7 9.5 H14" stroke="#1A1A1A" stroke-width="1.1"/><path d="M8.2 12.3 L10.5 14.6 L12.8 12.3" fill="none" stroke="#1A1A1A" stroke-width="1.1"/></svg>
<!-- EDIT AREA -->
<div class="a" style="left:226px;top:216px;width:1px;height:454px;background:#BDBDBD"></div>
<div class="a" style="left:291px;top:226px;width:762px;height:430px;background:#fff;border:1px solid #C8C8C8"></div>
<div class="a" style="left:0;top:0;width:1132px;height:696px;overflow:hidden"><!-- title -->
<div class="t" style="left:447.5px;top:373px;font-size:32.5px;color:#1F4A7D;transform:translateX(-50%) scaleX(0.93)">5 CONFLICT</div>
<div class="t" style="left:447.5px;top:411px;font-size:32.5px;color:#1F4A7D;transform:translateX(-50%) scaleX(0.91)">RESOLUTION</div>
<div class="t" style="left:447.5px;top:449px;font-size:32.5px;color:#1F4A7D;transform:translateX(-50%) scaleX(0.85)">STRATEGIES</div>
<div class="t" style="left:447.5px;top:487.3px;font-size:32.5px;color:#1F4A7D;transform:translateX(-50%) scaleX(0.95)">MODEL</div>
<div class="a" style="left:580px;top:270px;width:1.2px;height:342px;background:#A6A6A6"></div>
<!-- vertical arrow -->
<svg style="left:600px;top:240px" width="90" height="330" viewBox="600 240 90 330"><path d="M642 250.3 L674.6 282.6 H664.7 V562 H619.5 V282.6 H609.2 Z" fill="#F2F2F2"/></svg>
<!-- horizontal arrow -->
<svg style="left:670px;top:555px" width="340" height="85" viewBox="670 555 340 85"><path d="M683 574.6 H962.8 V564.4 L995 597 L962.8 629.6 V619 H683 Z" fill="#F2F2F2"/></svg>
<!-- grid -->
<div class="a" style="left:683px;top:289px;width:135.6px;height:135.5px;background:#F3F3F3"></div>
<div class="a" style="left:818.6px;top:289px;width:136.4px;height:135.5px;background:#EDEDED"></div>
<div class="a" style="left:683px;top:424.5px;width:135.6px;height:135.5px;background:#EDEDED"></div>
<div class="a" style="left:818.6px;top:424.5px;width:136.4px;height:135.5px;background:#F3F3F3"></div>
<div class="a" style="left:754.5px;top:360px;width:128.5px;height:126.7px;background:#D5D5D5"></div>
<div class="a" style="left:754.5px;top:424px;width:128.5px;height:1px;background:#CFCFCF"></div>
<div class="a" style="left:818px;top:360px;width:1px;height:126.7px;background:#D1D1D1"></div>
<!-- axis labels -->
<div class="t" style="left:639.8px;top:298.9px;font-size:13.5px;color:#595959;transform:translate(-50%,-50%) rotate(-90deg)">High</div>
<div class="t" style="left:634.5px;top:422.4px;font-size:13.5px;color:#595959;transform:translate(-50%,-50%) rotate(-90deg)">Concern</div>
<div class="t" style="left:649px;top:422.4px;font-size:13.5px;color:#595959;transform:translate(-50%,-50%) rotate(-90deg)">for Self</div>
<div class="t" style="left:640.9px;top:531.1px;font-size:13.5px;color:#595959;transform:translate(-50%,-50%) rotate(-90deg)">Low</div>
<div class="t" style="left:710px;top:595.5px;font-size:13.5px;color:#595959;transform:translate(-50%,-50%)">Low</div>
<div class="t" style="left:818.6px;top:589.5px;font-size:13.5px;color:#595959;transform:translate(-50%,-50%)">Concern</div>
<div class="t" style="left:819px;top:604px;font-size:13.5px;color:#595959;transform:translate(-50%,-50%)">for Others</div>
<div class="t" style="left:935.7px;top:595.5px;font-size:13.5px;color:#595959;transform:translate(-50%,-50%)">High</div>
<!-- quadrant labels -->
<div class="t" style="left:750.9px;top:310px;font-size:14.5px;font-weight:700;color:#EBB14A;transform:translate(-50%,-50%) scaleX(0.91);-webkit-text-stroke:0.35px #EBB14A">CONTEST</div>
<div class="t" style="left:886.45px;top:310px;font-size:14.5px;font-weight:700;color:#5FB7A0;transform:translate(-50%,-50%) scaleX(0.92);-webkit-text-stroke:0.35px #5FB7A0">COLLABORATE</div>
<div class="t" style="left:818.75px;top:445.75px;font-size:14.5px;font-weight:700;color:#2E7FAF;transform:translate(-50%,-50%) scaleX(0.96);-webkit-text-stroke:0.35px #2E7FAF">COMPROMISE</div>
<div class="t" style="left:750.9px;top:540px;font-size:14.5px;font-weight:700;color:#1F4A7E;transform:translate(-50%,-50%) scaleX(0.99);-webkit-text-stroke:0.35px #1F4A7E">WITHDRAW</div>
<div class="t" style="left:886.6px;top:540.1px;font-size:14.5px;font-weight:700;color:#8CB54F;transform:translate(-50%,-50%) scaleX(0.92);-webkit-text-stroke:0.35px #8CB54F">CONCEDE</div>
<!-- circles -->
<div class="a" style="left:720px;top:326px;width:62px;height:62px;border-radius:50%;background:#EBB14A;box-shadow:2px 4px 6px rgba(0,0,0,0.28)"></div>
<div class="a" style="left:855.5px;top:326px;width:62px;height:62px;border-radius:50%;background:#5FB7A0;box-shadow:2px 4px 6px rgba(0,0,0,0.28)"></div>
<div class="a" style="left:720px;top:461.5px;width:62px;height:62px;border-radius:50%;background:#1F4A7E;box-shadow:2px 4px 6px rgba(0,0,0,0.28)"></div>
<div class="a" style="left:855.5px;top:461.5px;width:62px;height:62px;border-radius:50%;background:#8CB54F;box-shadow:2px 4px 6px rgba(0,0,0,0.28)"></div>
<div class="a" style="left:787px;top:372px;width:62px;height:62px;border-radius:50%;background:#2E7FAF;box-shadow:2px 4px 6px rgba(0,0,0,0.3)"></div>

<!-- icons -->
<svg style="left:0;top:0" width="1132" height="696" viewBox="0 0 1132 696">
<g fill="#fff">
<path d="M743.2 343.9 H758.9 V351.5 Q758.9 357.3 753.2 359.4 V364 H757.1 V369.9 H745.1 V364 H748.9 V359.4 Q743.2 357.3 743.2 351.5 Z"/>
<rect x="748" y="365.1" width="5.9" height="2.8" fill="#EBB14A"/>
</g>
<g fill="none" stroke="#fff" stroke-width="1.4">
<path d="M743.4 346.2 C735.2 343.6 734.8 352.6 743.6 354.6 M742.6 355.3 Q740.2 356.2 741.8 357.6"/>
<path d="M758.7 346.2 C766.9 343.6 767.3 352.6 758.5 354.6 M759.5 355.3 Q761.9 356.2 760.3 357.6"/>
</g>

<g fill="#fff"><g transform="translate(887 366.3)"><path d="M-3.3 -0.6 H6.1 V4.6 Q6.1 9.2 1.6 9.2 Q-1.4 9.2 -2.9 6.6 L-6.9 1.9 Q-7 0.7 -5.8 0.9 L-3.3 3 Z"/><rect x="-3.2" y="-7.4" width="1.9" height="7.4" rx="0.9"/><rect x="-0.5" y="-9.2" width="1.9" height="9.2" rx="0.9"/><rect x="2.2" y="-8.4" width="1.9" height="8.4" rx="0.9"/><rect x="4.3" y="-5.3" width="1.8" height="5.3" rx="0.9"/></g><g transform="translate(876.8 347.6) rotate(135)"><path d="M-3.3 -0.6 H6.1 V4.6 Q6.1 9.2 1.6 9.2 Q-1.4 9.2 -2.9 6.6 L-6.9 1.9 Q-7 0.7 -5.8 0.9 L-3.3 3 Z"/><rect x="-3.2" y="-7.4" width="1.9" height="7.4" rx="0.9"/><rect x="-0.5" y="-9.2" width="1.9" height="9.2" rx="0.9"/><rect x="2.2" y="-8.4" width="1.9" height="8.4" rx="0.9"/><rect x="4.3" y="-5.3" width="1.8" height="5.3" rx="0.9"/></g><g transform="translate(897.6 347.2) rotate(-135)"><path d="M-3.3 -0.6 H6.1 V4.6 Q6.1 9.2 1.6 9.2 Q-1.4 9.2 -2.9 6.6 L-6.9 1.9 Q-7 0.7 -5.8 0.9 L-3.3 3 Z"/><rect x="-3.2" y="-7.4" width="1.9" height="7.4" rx="0.9"/><rect x="-0.5" y="-9.2" width="1.9" height="9.2" rx="0.9"/><rect x="2.2" y="-8.4" width="1.9" height="8.4" rx="0.9"/><rect x="4.3" y="-5.3" width="1.8" height="5.3" rx="0.9"/></g></g>
<g fill="#fff">
<path d="M799.15 399.7 L809.2 389.9 L813.8 393.9 L817 394.6 L819.2 394.4 L824.4 389.9 L833.9 399.7 L829.4 404.8 L830.9 409.2 L817 420.6 L804.2 411.4 L803.6 407.2 Z"/>
</g>
<g fill="none" stroke="#2E7FAF" stroke-width="1.2" stroke-linecap="round">
<path d="M803.9 407.4 L811.2 400.2 M829.2 404.9 L825.4 401.2"/>
<path d="M807.8 397.2 L810.4 400 Q813.6 396.2 817 397 L820.4 398.4 Q822.8 400 821.4 401.9 Q820.2 403 818.2 402"/>
<path d="M805.4 411.2 L811.4 404.6 M808.4 413.8 L813.2 408.4 M811.4 416.4 L814.8 412.6 M814.2 418.8 L816 416.8"/>
<path d="M818.8 405.4 L824.4 411 M817 408.6 L821.8 413.4 M816.2 412.2 L819.2 415.2"/>
</g>
<path fill="#fff" fill-rule="evenodd" d="M742.2 481 H760 L764.9 495.4 V504 H737 V495.4 Z M743.9 482.8 H758.3 L762.1 495.1 H754.6 V497.7 H747.4 V495.1 H740.1 Z"/>
<rect x="746.4" y="480" width="9.4" height="3.4" fill="#1F4A7E"/>
<path fill="#fff" d="M748.5 481 H753.7 V488.5 H756.9 L751.1 494.8 L745.1 488.5 H748.5 Z"/>
<path d="M872.6 505.2 L882.4 478.7" stroke="#fff" stroke-width="1.7" stroke-linecap="round"/>
<path fill="#fff" d="M882.4 478.7 Q886 482.8 891.8 481.6 Q897.2 480.6 900.5 483.9 L895.6 499.4 Q891.2 495.6 885.8 497 Q880.5 498.5 877.8 496 Z"/>
<path fill="#8CB54F" d="M884.6 482.6 L887.4 482.9 L886.3 486.0 L883.5 485.7ZM882.4 488.7 L885.3 489.0 L884.2 492.1 L881.3 491.8ZM886.3 486.0 L889.2 486.3 L888.1 489.4 L885.3 489.0ZM884.2 492.1 L887.0 492.5 L886.0 495.5 L883.1 495.2ZM890.3 483.2 L893.1 483.6 L892.0 486.6 L889.2 486.3ZM888.1 489.4 L891.0 489.7 L889.9 492.8 L887.0 492.5ZM892.0 486.6 L894.9 487.0 L893.8 490.1 L891.0 489.7ZM889.9 492.8 L892.8 493.2 L891.7 496.2 L888.8 495.9ZM896.0 483.9 L898.8 484.2 L897.7 487.3 L894.9 487.0ZM893.8 490.1 L896.7 490.4 L895.7 493.5 L892.8 493.2Z"/>
</svg>
</div>
<!-- SLIDE PANEL -->
<div class="t" style="left:13px;top:231px;font-size:14px;color:#C43E1C">1</div>
<div class="t" style="left:13px;top:336px;font-size:14px;color:#404040">2</div>
<div class="t" style="left:13px;top:441px;font-size:14px;color:#404040">3</div>
<div class="t" style="left:13px;top:546px;font-size:14px;color:#404040">4</div>
<div class="t" style="left:13px;top:651px;font-size:14px;color:#404040">5</div>
<div class="a" style="left:0;top:214px;width:205px;height:459px;overflow:hidden">
<div class="a" style="left:33px;top:16px;width:155px;height:91px;border:3px solid #C43E1C;border-radius:7px;background:#fff"></div>
<div class="a" style="left:36.4px;top:19.4px;width:148.4px;height:84.4px;overflow:hidden;background:#fff"><div class="a" style="left:0;top:0;width:1132px;height:696px;transform-origin:0 0;transform:translate(-56.1px,-43.2px) scale(0.1945)"><!-- title -->
<div class="t" style="left:447.5px;top:373px;font-size:32.5px;color:#1F4A7D;transform:translateX(-50%) scaleX(0.93)">5 CONFLICT</div>
<div class="t" style="left:447.5px;top:411px;font-size:32.5px;color:#1F4A7D;transform:translateX(-50%) scaleX(0.91)">RESOLUTION</div>
<div class="t" style="left:447.5px;top:449px;font-size:32.5px;color:#1F4A7D;transform:translateX(-50%) scaleX(0.85)">STRATEGIES</div>
<div class="t" style="left:447.5px;top:487.3px;font-size:32.5px;color:#1F4A7D;transform:translateX(-50%) scaleX(0.95)">MODEL</div>
<div class="a" style="left:580px;top:270px;width:1.2px;height:342px;background:#A6A6A6"></div>
<!-- vertical arrow -->
<svg style="left:600px;top:240px" width="90" height="330" viewBox="600 240 90 330"><path d="M642 250.3 L674.6 282.6 H664.7 V562 H619.5 V282.6 H609.2 Z" fill="#F2F2F2"/></svg>
<!-- horizontal arrow -->
<svg style="left:670px;top:555px" width="340" height="85" viewBox="670 555 340 85"><path d="M683 574.6 H962.8 V564.4 L995 597 L962.8 629.6 V619 H683 Z" fill="#F2F2F2"/></svg>
<!-- grid -->
<div class="a" style="left:683px;top:289px;width:135.6px;height:135.5px;background:#F3F3F3"></div>
<div class="a" style="left:818.6px;top:289px;width:136.4px;height:135.5px;background:#EDEDED"></div>
<div class="a" style="left:683px;top:424.5px;width:135.6px;height:135.5px;background:#EDEDED"></div>
<div class="a" style="left:818.6px;top:424.5px;width:136.4px;height:135.5px;background:#F3F3F3"></div>
<div class="a" style="left:754.5px;top:360px;width:128.5px;height:126.7px;background:#D5D5D5"></div>
<div class="a" style="left:754.5px;top:424px;width:128.5px;height:1px;background:#CFCFCF"></div>
<div class="a" style="left:818px;top:360px;width:1px;height:126.7px;background:#D1D1D1"></div>
<!-- axis labels -->
<div class="t" style="left:639.8px;top:298.9px;font-size:13.5px;color:#595959;transform:translate(-50%,-50%) rotate(-90deg)">High</div>
<div class="t" style="left:634.5px;top:422.4px;font-size:13.5px;color:#595959;transform:translate(-50%,-50%) rotate(-90deg)">Concern</div>
<div class="t" style="left:649px;top:422.4px;font-size:13.5px;color:#595959;transform:translate(-50%,-50%) rotate(-90deg)">for Self</div>
<div class="t" style="left:640.9px;top:531.1px;font-size:13.5px;color:#595959;transform:translate(-50%,-50%) rotate(-90deg)">Low</div>
<div class="t" style="left:710px;top:595.5px;font-size:13.5px;color:#595959;transform:translate(-50%,-50%)">Low</div>
<div class="t" style="left:818.6px;top:589.5px;font-size:13.5px;color:#595959;transform:translate(-50%,-50%)">Concern</div>
<div class="t" style="left:819px;top:604px;font-size:13.5px;color:#595959;transform:translate(-50%,-50%)">for Others</div>
<div class="t" style="left:935.7px;top:595.5px;font-size:13.5px;color:#595959;transform:translate(-50%,-50%)">High</div>
<!-- quadrant labels -->
<div class="t" style="left:750.9px;top:310px;font-size:14.5px;font-weight:700;color:#EBB14A;transform:translate(-50%,-50%) scaleX(0.91);-webkit-text-stroke:0.35px #EBB14A">CONTEST</div>
<div class="t" style="left:886.45px;top:310px;font-size:14.5px;font-weight:700;color:#5FB7A0;transform:translate(-50%,-50%) scaleX(0.92);-webkit-text-stroke:0.35px #5FB7A0">COLLABORATE</div>
<div class="t" style="left:818.75px;top:445.75px;font-size:14.5px;font-weight:700;color:#2E7FAF;transform:translate(-50%,-50%) scaleX(0.96);-webkit-text-stroke:0.35px #2E7FAF">COMPROMISE</div>
<div class="t" style="left:750.9px;top:540px;font-size:14.5px;font-weight:700;color:#1F4A7E;transform:translate(-50%,-50%) scaleX(0.99);-webkit-text-stroke:0.35px #1F4A7E">WITHDRAW</div>
<div class="t" style="left:886.6px;top:540.1px;font-size:14.5px;font-weight:700;color:#8CB54F;transform:translate(-50%,-50%) scaleX(0.92);-webkit-text-stroke:0.35px #8CB54F">CONCEDE</div>
<!-- circles -->
<div class="a" style="left:720px;top:326px;width:62px;height:62px;border-radius:50%;background:#EBB14A;box-shadow:2px 4px 6px rgba(0,0,0,0.28)"></div>
<div class="a" style="left:855.5px;top:326px;width:62px;height:62px;border-radius:50%;background:#5FB7A0;box-shadow:2px 4px 6px rgba(0,0,0,0.28)"></div>
<div class="a" style="left:720px;top:461.5px;width:62px;height:62px;border-radius:50%;background:#1F4A7E;box-shadow:2px 4px 6px rgba(0,0,0,0.28)"></div>
<div class="a" style="left:855.5px;top:461.5px;width:62px;height:62px;border-radius:50%;background:#8CB54F;box-shadow:2px 4px 6px rgba(0,0,0,0.28)"></div>
<div class="a" style="left:787px;top:372px;width:62px;height:62px;border-radius:50%;background:#2E7FAF;box-shadow:2px 4px 6px rgba(0,0,0,0.3)"></div>

<!-- icons -->
<svg style="left:0;top:0" width="1132" height="696" viewBox="0 0 1132 696">
<g fill="#fff">
<path d="M743.2 343.9 H758.9 V351.5 Q758.9 357.3 753.2 359.4 V364 H757.1 V369.9 H745.1 V364 H748.9 V359.4 Q743.2 357.3 743.2 351.5 Z"/>
<rect x="748" y="365.1" width="5.9" height="2.8" fill="#EBB14A"/>
</g>
<g fill="none" stroke="#fff" stroke-width="1.4">
<path d="M743.4 346.2 C735.2 343.6 734.8 352.6 743.6 354.6 M742.6 355.3 Q740.2 356.2 741.8 357.6"/>
<path d="M758.7 346.2 C766.9 343.6 767.3 352.6 758.5 354.6 M759.5 355.3 Q761.9 356.2 760.3 357.6"/>
</g>

<g fill="#fff"><g transform="translate(887 366.3)"><path d="M-3.3 -0.6 H6.1 V4.6 Q6.1 9.2 1.6 9.2 Q-1.4 9.2 -2.9 6.6 L-6.9 1.9 Q-7 0.7 -5.8 0.9 L-3.3 3 Z"/><rect x="-3.2" y="-7.4" width="1.9" height="7.4" rx="0.9"/><rect x="-0.5" y="-9.2" width="1.9" height="9.2" rx="0.9"/><rect x="2.2" y="-8.4" width="1.9" height="8.4" rx="0.9"/><rect x="4.3" y="-5.3" width="1.8" height="5.3" rx="0.9"/></g><g transform="translate(876.8 347.6) rotate(135)"><path d="M-3.3 -0.6 H6.1 V4.6 Q6.1 9.2 1.6 9.2 Q-1.4 9.2 -2.9 6.6 L-6.9 1.9 Q-7 0.7 -5.8 0.9 L-3.3 3 Z"/><rect x="-3.2" y="-7.4" width="1.9" height="7.4" rx="0.9"/><rect x="-0.5" y="-9.2" width="1.9" height="9.2" rx="0.9"/><rect x="2.2" y="-8.4" width="1.9" height="8.4" rx="0.9"/><rect x="4.3" y="-5.3" width="1.8" height="5.3" rx="0.9"/></g><g transform="translate(897.6 347.2) rotate(-135)"><path d="M-3.3 -0.6 H6.1 V4.6 Q6.1 9.2 1.6 9.2 Q-1.4 9.2 -2.9 6.6 L-6.9 1.9 Q-7 0.7 -5.8 0.9 L-3.3 3 Z"/><rect x="-3.2" y="-7.4" width="1.9" height="7.4" rx="0.9"/><rect x="-0.5" y="-9.2" width="1.9" height="9.2" rx="0.9"/><rect x="2.2" y="-8.4" width="1.9" height="8.4" rx="0.9"/><rect x="4.3" y="-5.3" width="1.8" height="5.3" rx="0.9"/></g></g>
<g fill="#fff">
<path d="M799.15 399.7 L809.2 389.9 L813.8 393.9 L817 394.6 L819.2 394.4 L824.4 389.9 L833.9 399.7 L829.4 404.8 L830.9 409.2 L817 420.6 L804.2 411.4 L803.6 407.2 Z"/>
</g>
<g fill="none" stroke="#2E7FAF" stroke-width="1.2" stroke-linecap="round">
<path d="M803.9 407.4 L811.2 400.2 M829.2 404.9 L825.4 401.2"/>
<path d="M807.8 397.2 L810.4 400 Q813.6 396.2 817 397 L820.4 398.4 Q822.8 400 821.4 401.9 Q820.2 403 818.2 402"/>
<path d="M805.4 411.2 L811.4 404.6 M808.4 413.8 L813.2 408.4 M811.4 416.4 L814.8 412.6 M814.2 418.8 L816 416.8"/>
<path d="M818.8 405.4 L824.4 411 M817 408.6 L821.8 413.4 M816.2 412.2 L819.2 415.2"/>
</g>
<path fill="#fff" fill-rule="evenodd" d="M742.2 481 H760 L764.9 495.4 V504 H737 V495.4 Z M743.9 482.8 H758.3 L762.1 495.1 H754.6 V497.7 H747.4 V495.1 H740.1 Z"/>
<rect x="746.4" y="480" width="9.4" height="3.4" fill="#1F4A7E"/>
<path fill="#fff" d="M748.5 481 H753.7 V488.5 H756.9 L751.1 494.8 L745.1 488.5 H748.5 Z"/>
<path d="M872.6 505.2 L882.4 478.7" stroke="#fff" stroke-width="1.7" stroke-linecap="round"/>
<path fill="#fff" d="M882.4 478.7 Q886 482.8 891.8 481.6 Q897.2 480.6 900.5 483.9 L895.6 499.4 Q891.2 495.6 885.8 497 Q880.5 498.5 877.8 496 Z"/>
<path fill="#8CB54F" d="M884.6 482.6 L887.4 482.9 L886.3 486.0 L883.5 485.7ZM882.4 488.7 L885.3 489.0 L884.2 492.1 L881.3 491.8ZM886.3 486.0 L889.2 486.3 L888.1 489.4 L885.3 489.0ZM884.2 492.1 L887.0 492.5 L886.0 495.5 L883.1 495.2ZM890.3 483.2 L893.1 483.6 L892.0 486.6 L889.2 486.3ZM888.1 489.4 L891.0 489.7 L889.9 492.8 L887.0 492.5ZM892.0 486.6 L894.9 487.0 L893.8 490.1 L891.0 489.7ZM889.9 492.8 L892.8 493.2 L891.7 496.2 L888.8 495.9ZM896.0 483.9 L898.8 484.2 L897.7 487.3 L894.9 487.0ZM893.8 490.1 L896.7 490.4 L895.7 493.5 L892.8 493.2Z"/>
</svg>
</div></div>
<div class="a" style="left:36px;top:124.1px;width:149px;height:85px;border:1px solid #BDBDBD;border-radius:5px;background:#fff;overflow:hidden">
<svg style="left:0;top:-1px" width="148" height="83.2" viewBox="0 0 761 428"><text x="39" y="50" font-family="Liberation Sans" font-size="27" fill="#3A3A3A" textLength="440" lengthAdjust="spacingAndGlyphs">5 Conflict Resolution Strategies Model</text><g transform="translate(-235.3 52.3) scale(0.868)"><path d="M351 24.3 L383.6 56.6 H373.7 V336 H328.5 V56.6 H318.2 Z" fill="#F2F2F2"/><path d="M392 348.6 H671.8 V338.4 L704 371 L671.8 403.6 V393 H392 Z" fill="#F2F2F2"/><rect x="392" y="63" width="135.6" height="135.5" fill="#F3F3F3"/><rect x="527.6" y="63" width="136.4" height="135.5" fill="#EDEDED"/><rect x="392" y="198.5" width="135.6" height="135.5" fill="#EDEDED"/><rect x="527.6" y="198.5" width="136.4" height="135.5" fill="#F3F3F3"/><rect x="463.5" y="134" width="128.5" height="126.7" fill="#D5D5D5"/><circle cx="463" cy="136" r="32" fill="#000" opacity="0.12"/><circle cx="460" cy="131" r="31" fill="#EBB14A"/><circle cx="598.5" cy="136" r="32" fill="#000" opacity="0.12"/><circle cx="595.5" cy="131" r="31" fill="#A8A8A8"/><circle cx="463" cy="271.5" r="32" fill="#000" opacity="0.12"/><circle cx="460" cy="266.5" r="31" fill="#A8A8A8"/><circle cx="598.5" cy="271.5" r="32" fill="#000" opacity="0.12"/><circle cx="595.5" cy="266.5" r="31" fill="#A8A8A8"/><circle cx="530" cy="182" r="32" fill="#000" opacity="0.12"/><circle cx="527" cy="177" r="31" fill="#A8A8A8"/><g transform="translate(-291 -226)">
<g fill="#fff">
<path d="M743.2 343.9 H758.9 V351.5 Q758.9 357.3 753.2 359.4 V364 H757.1 V369.9 H745.1 V364 H748.9 V359.4 Q743.2 357.3 743.2 351.5 Z"/>
<rect x="748" y="365.1" width="5.9" height="2.8" fill="#A8A8A8"/>
</g>
<g fill="none" stroke="#fff" stroke-width="1.4">
<path d="M743.4 346.2 C735.2 343.6 734.8 352.6 743.6 354.6 M742.6 355.3 Q740.2 356.2 741.8 357.6"/>
<path d="M758.7 346.2 C766.9 343.6 767.3 352.6 758.5 354.6 M759.5 355.3 Q761.9 356.2 760.3 357.6"/>
</g>

<g fill="#fff"><g transform="translate(887 366.3)"><path d="M-3.3 -0.6 H6.1 V4.6 Q6.1 9.2 1.6 9.2 Q-1.4 9.2 -2.9 6.6 L-6.9 1.9 Q-7 0.7 -5.8 0.9 L-3.3 3 Z"/><rect x="-3.2" y="-7.4" width="1.9" height="7.4" rx="0.9"/><rect x="-0.5" y="-9.2" width="1.9" height="9.2" rx="0.9"/><rect x="2.2" y="-8.4" width="1.9" height="8.4" rx="0.9"/><rect x="4.3" y="-5.3" width="1.8" height="5.3" rx="0.9"/></g><g transform="translate(876.8 347.6) rotate(135)"><path d="M-3.3 -0.6 H6.1 V4.6 Q6.1 9.2 1.6 9.2 Q-1.4 9.2 -2.9 6.6 L-6.9 1.9 Q-7 0.7 -5.8 0.9 L-3.3 3 Z"/><rect x="-3.2" y="-7.4" width="1.9" height="7.4" rx="0.9"/><rect x="-0.5" y="-9.2" width="1.9" height="9.2" rx="0.9"/><rect x="2.2" y="-8.4" width="1.9" height="8.4" rx="0.9"/><rect x="4.3" y="-5.3" width="1.8" height="5.3" rx="0.9"/></g><g transform="translate(897.6 347.2) rotate(-135)"><path d="M-3.3 -0.6 H6.1 V4.6 Q6.1 9.2 1.6 9.2 Q-1.4 9.2 -2.9 6.6 L-6.9 1.9 Q-7 0.7 -5.8 0.9 L-3.3 3 Z"/><rect x="-3.2" y="-7.4" width="1.9" height="7.4" rx="0.9"/><rect x="-0.5" y="-9.2" width="1.9" height="9.2" rx="0.9"/><rect x="2.2" y="-8.4" width="1.9" height="8.4" rx="0.9"/><rect x="4.3" y="-5.3" width="1.8" height="5.3" rx="0.9"/></g></g>
<g fill="#fff">
<path d="M799.15 399.7 L809.2 389.9 L813.8 393.9 L817 394.6 L819.2 394.4 L824.4 389.9 L833.9 399.7 L829.4 404.8 L830.9 409.2 L817 420.6 L804.2 411.4 L803.6 407.2 Z"/>
</g>
<g fill="none" stroke="#A8A8A8" stroke-width="1.2" stroke-linecap="round">
<path d="M803.9 407.4 L811.2 400.2 M829.2 404.9 L825.4 401.2"/>
<path d="M807.8 397.2 L810.4 400 Q813.6 396.2 817 397 L820.4 398.4 Q822.8 400 821.4 401.9 Q820.2 403 818.2 402"/>
<path d="M805.4 411.2 L811.4 404.6 M808.4 413.8 L813.2 408.4 M811.4 416.4 L814.8 412.6 M814.2 418.8 L816 416.8"/>
<path d="M818.8 405.4 L824.4 411 M817 408.6 L821.8 413.4 M816.2 412.2 L819.2 415.2"/>
</g>
<path fill="#fff" fill-rule="evenodd" d="M742.2 481 H760 L764.9 495.4 V504 H737 V495.4 Z M743.9 482.8 H758.3 L762.1 495.1 H754.6 V497.7 H747.4 V495.1 H740.1 Z"/>
<rect x="746.4" y="480" width="9.4" height="3.4" fill="#A8A8A8"/>
<path fill="#fff" d="M748.5 481 H753.7 V488.5 H756.9 L751.1 494.8 L745.1 488.5 H748.5 Z"/>
<path d="M872.6 505.2 L882.4 478.7" stroke="#fff" stroke-width="1.7" stroke-linecap="round"/>
<path fill="#fff" d="M882.4 478.7 Q886 482.8 891.8 481.6 Q897.2 480.6 900.5 483.9 L895.6 499.4 Q891.2 495.6 885.8 497 Q880.5 498.5 877.8 496 Z"/>
<path fill="#A8A8A8" d="M884.6 482.6 L887.4 482.9 L886.3 486.0 L883.5 485.7ZM882.4 488.7 L885.3 489.0 L884.2 492.1 L881.3 491.8ZM886.3 486.0 L889.2 486.3 L888.1 489.4 L885.3 489.0ZM884.2 492.1 L887.0 492.5 L886.0 495.5 L883.1 495.2ZM890.3 483.2 L893.1 483.6 L892.0 486.6 L889.2 486.3ZM888.1 489.4 L891.0 489.7 L889.9 492.8 L887.0 492.5ZM892.0 486.6 L894.9 487.0 L893.8 490.1 L891.0 489.7ZM889.9 492.8 L892.8 493.2 L891.7 496.2 L888.8 495.9ZM896.0 483.9 L898.8 484.2 L897.7 487.3 L894.9 487.0ZM893.8 490.1 L896.7 490.4 L895.7 493.5 L892.8 493.2Z"/>
</g><rect x="429.0" y="88" width="62" height="8" fill="#EBB14A" opacity="0.55"/><rect x="545.5" y="88" width="100" height="8" fill="#9A9A9A" opacity="0.55"/><rect x="479.70000000000005" y="224" width="96" height="8" fill="#9A9A9A" opacity="0.55"/><rect x="420.0" y="318" width="80" height="8" fill="#9A9A9A" opacity="0.55"/><rect x="562.5" y="318" width="66" height="8" fill="#9A9A9A" opacity="0.55"/><rect x="345" y="60" width="10" height="26" fill="#BBBBBB" opacity="0.8"/><rect x="340" y="172" width="10" height="48" fill="#BBBBBB" opacity="0.8"/><rect x="354" y="175" width="10" height="42" fill="#BBBBBB" opacity="0.8"/><rect x="345" y="292" width="10" height="26" fill="#BBBBBB" opacity="0.8"/><rect x="408" y="364" width="24" height="10" fill="#BBBBBB" opacity="0.8"/><rect x="503" y="358" width="50" height="10" fill="#BBBBBB" opacity="0.8"/><rect x="498" y="373" width="60" height="10" fill="#BBBBBB" opacity="0.8"/><rect x="631" y="364" width="28" height="10" fill="#BBBBBB" opacity="0.8"/></g><rect x="378" y="107" width="340" height="237" fill="#EFEFEF"/><defs><linearGradient id="bg_contest" x1="0" x2="1"><stop offset="0" stop-color="#E3A12F"/><stop offset="1" stop-color="#E3A12F" stop-opacity="0.7"/></linearGradient></defs><path d="M378 122 H686 L668 158 H378 Z" fill="url(#bg_contest)"/><text x="392" y="150" font-family="Liberation Sans" font-weight="700" font-size="17" fill="#fff">CONTEST</text><rect x="392" y="181" width="290" height="6" fill="#6A6A6A" opacity="0.45"/><rect x="392" y="193" width="295" height="6" fill="#6A6A6A" opacity="0.45"/><rect x="392" y="205" width="55" height="6" fill="#6A6A6A" opacity="0.45"/></svg>
</div>
<div class="a" style="left:36px;top:229.4px;width:149px;height:85px;border:1px solid #BDBDBD;border-radius:5px;background:#fff;overflow:hidden">
<svg style="left:0;top:-1px" width="148" height="83.2" viewBox="0 0 761 428"><text x="39" y="50" font-family="Liberation Sans" font-size="27" fill="#3A3A3A" textLength="440" lengthAdjust="spacingAndGlyphs">5 Conflict Resolution Strategies Model</text><g transform="translate(-235.3 52.3) scale(0.868)"><path d="M351 24.3 L383.6 56.6 H373.7 V336 H328.5 V56.6 H318.2 Z" fill="#F2F2F2"/><path d="M392 348.6 H671.8 V338.4 L704 371 L671.8 403.6 V393 H392 Z" fill="#F2F2F2"/><rect x="392" y="63" width="135.6" height="135.5" fill="#F3F3F3"/><rect x="527.6" y="63" width="136.4" height="135.5" fill="#EDEDED"/><rect x="392" y="198.5" width="135.6" height="135.5" fill="#EDEDED"/><rect x="527.6" y="198.5" width="136.4" height="135.5" fill="#F3F3F3"/><rect x="463.5" y="134" width="128.5" height="126.7" fill="#D5D5D5"/><circle cx="463" cy="136" r="32" fill="#000" opacity="0.12"/><circle cx="460" cy="131" r="31" fill="#A8A8A8"/><circle cx="598.5" cy="136" r="32" fill="#000" opacity="0.12"/><circle cx="595.5" cy="131" r="31" fill="#5FB7A0"/><circle cx="463" cy="271.5" r="32" fill="#000" opacity="0.12"/><circle cx="460" cy="266.5" r="31" fill="#A8A8A8"/><circle cx="598.5" cy="271.5" r="32" fill="#000" opacity="0.12"/><circle cx="595.5" cy="266.5" r="31" fill="#A8A8A8"/><circle cx="530" cy="182" r="32" fill="#000" opacity="0.12"/><circle cx="527" cy="177" r="31" fill="#A8A8A8"/><g transform="translate(-291 -226)">
<g fill="#fff">
<path d="M743.2 343.9 H758.9 V351.5 Q758.9 357.3 753.2 359.4 V364 H757.1 V369.9 H745.1 V364 H748.9 V359.4 Q743.2 357.3 743.2 351.5 Z"/>
<rect x="748" y="365.1" width="5.9" height="2.8" fill="#A8A8A8"/>
</g>
<g fill="none" stroke="#fff" stroke-width="1.4">
<path d="M743.4 346.2 C735.2 343.6 734.8 352.6 743.6 354.6 M742.6 355.3 Q740.2 356.2 741.8 357.6"/>
<path d="M758.7 346.2 C766.9 343.6 767.3 352.6 758.5 354.6 M759.5 355.3 Q761.9 356.2 760.3 357.6"/>
</g>

<g fill="#fff"><g transform="translate(887 366.3)"><path d="M-3.3 -0.6 H6.1 V4.6 Q6.1 9.2 1.6 9.2 Q-1.4 9.2 -2.9 6.6 L-6.9 1.9 Q-7 0.7 -5.8 0.9 L-3.3 3 Z"/><rect x="-3.2" y="-7.4" width="1.9" height="7.4" rx="0.9"/><rect x="-0.5" y="-9.2" width="1.9" height="9.2" rx="0.9"/><rect x="2.2" y="-8.4" width="1.9" height="8.4" rx="0.9"/><rect x="4.3" y="-5.3" width="1.8" height="5.3" rx="0.9"/></g><g transform="translate(876.8 347.6) rotate(135)"><path d="M-3.3 -0.6 H6.1 V4.6 Q6.1 9.2 1.6 9.2 Q-1.4 9.2 -2.9 6.6 L-6.9 1.9 Q-7 0.7 -5.8 0.9 L-3.3 3 Z"/><rect x="-3.2" y="-7.4" width="1.9" height="7.4" rx="0.9"/><rect x="-0.5" y="-9.2" width="1.9" height="9.2" rx="0.9"/><rect x="2.2" y="-8.4" width="1.9" height="8.4" rx="0.9"/><rect x="4.3" y="-5.3" width="1.8" height="5.3" rx="0.9"/></g><g transform="translate(897.6 347.2) rotate(-135)"><path d="M-3.3 -0.6 H6.1 V4.6 Q6.1 9.2 1.6 9.2 Q-1.4 9.2 -2.9 6.6 L-6.9 1.9 Q-7 0.7 -5.8 0.9 L-3.3 3 Z"/><rect x="-3.2" y="-7.4" width="1.9" height="7.4" rx="0.9"/><rect x="-0.5" y="-9.2" width="1.9" height="9.2" rx="0.9"/><rect x="2.2" y="-8.4" width="1.9" height="8.4" rx="0.9"/><rect x="4.3" y="-5.3" width="1.8" height="5.3" rx="0.9"/></g></g>
<g fill="#fff">
<path d="M799.15 399.7 L809.2 389.9 L813.8 393.9 L817 394.6 L819.2 394.4 L824.4 389.9 L833.9 399.7 L829.4 404.8 L830.9 409.2 L817 420.6 L804.2 411.4 L803.6 407.2 Z"/>
</g>
<g fill="none" stroke="#A8A8A8" stroke-width="1.2" stroke-linecap="round">
<path d="M803.9 407.4 L811.2 400.2 M829.2 404.9 L825.4 401.2"/>
<path d="M807.8 397.2 L810.4 400 Q813.6 396.2 817 397 L820.4 398.4 Q822.8 400 821.4 401.9 Q820.2 403 818.2 402"/>
<path d="M805.4 411.2 L811.4 404.6 M808.4 413.8 L813.2 408.4 M811.4 416.4 L814.8 412.6 M814.2 418.8 L816 416.8"/>
<path d="M818.8 405.4 L824.4 411 M817 408.6 L821.8 413.4 M816.2 412.2 L819.2 415.2"/>
</g>
<path fill="#fff" fill-rule="evenodd" d="M742.2 481 H760 L764.9 495.4 V504 H737 V495.4 Z M743.9 482.8 H758.3 L762.1 495.1 H754.6 V497.7 H747.4 V495.1 H740.1 Z"/>
<rect x="746.4" y="480" width="9.4" height="3.4" fill="#A8A8A8"/>
<path fill="#fff" d="M748.5 481 H753.7 V488.5 H756.9 L751.1 494.8 L745.1 488.5 H748.5 Z"/>
<path d="M872.6 505.2 L882.4 478.7" stroke="#fff" stroke-width="1.7" stroke-linecap="round"/>
<path fill="#fff" d="M882.4 478.7 Q886 482.8 891.8 481.6 Q897.2 480.6 900.5 483.9 L895.6 499.4 Q891.2 495.6 885.8 497 Q880.5 498.5 877.8 496 Z"/>
<path fill="#A8A8A8" d="M884.6 482.6 L887.4 482.9 L886.3 486.0 L883.5 485.7ZM882.4 488.7 L885.3 489.0 L884.2 492.1 L881.3 491.8ZM886.3 486.0 L889.2 486.3 L888.1 489.4 L885.3 489.0ZM884.2 492.1 L887.0 492.5 L886.0 495.5 L883.1 495.2ZM890.3 483.2 L893.1 483.6 L892.0 486.6 L889.2 486.3ZM888.1 489.4 L891.0 489.7 L889.9 492.8 L887.0 492.5ZM892.0 486.6 L894.9 487.0 L893.8 490.1 L891.0 489.7ZM889.9 492.8 L892.8 493.2 L891.7 496.2 L888.8 495.9ZM896.0 483.9 L898.8 484.2 L897.7 487.3 L894.9 487.0ZM893.8 490.1 L896.7 490.4 L895.7 493.5 L892.8 493.2Z"/>
</g><rect x="429.0" y="88" width="62" height="8" fill="#9A9A9A" opacity="0.55"/><rect x="545.5" y="88" width="100" height="8" fill="#5FB7A0" opacity="0.55"/><rect x="479.70000000000005" y="224" width="96" height="8" fill="#9A9A9A" opacity="0.55"/><rect x="420.0" y="318" width="80" height="8" fill="#9A9A9A" opacity="0.55"/><rect x="562.5" y="318" width="66" height="8" fill="#9A9A9A" opacity="0.55"/><rect x="345" y="60" width="10" height="26" fill="#BBBBBB" opacity="0.8"/><rect x="340" y="172" width="10" height="48" fill="#BBBBBB" opacity="0.8"/><rect x="354" y="175" width="10" height="42" fill="#BBBBBB" opacity="0.8"/><rect x="345" y="292" width="10" height="26" fill="#BBBBBB" opacity="0.8"/><rect x="408" y="364" width="24" height="10" fill="#BBBBBB" opacity="0.8"/><rect x="503" y="358" width="50" height="10" fill="#BBBBBB" opacity="0.8"/><rect x="498" y="373" width="60" height="10" fill="#BBBBBB" opacity="0.8"/><rect x="631" y="364" width="28" height="10" fill="#BBBBBB" opacity="0.8"/></g><rect x="378" y="107" width="340" height="237" fill="#EFEFEF"/><defs><linearGradient id="bg_collab" x1="0" x2="1"><stop offset="0" stop-color="#4FA88C"/><stop offset="1" stop-color="#4FA88C" stop-opacity="0.7"/></linearGradient></defs><path d="M378 122 H686 L668 158 H378 Z" fill="url(#bg_collab)"/><text x="392" y="150" font-family="Liberation Sans" font-weight="700" font-size="17" fill="#fff">COLLABORATE</text><rect x="392" y="181" width="290" height="6" fill="#6A6A6A" opacity="0.45"/><rect x="392" y="193" width="295" height="6" fill="#6A6A6A" opacity="0.45"/><rect x="392" y="205" width="55" height="6" fill="#6A6A6A" opacity="0.45"/></svg>
</div>
<div class="a" style="left:36px;top:334.5px;width:149px;height:85px;border:1px solid #BDBDBD;border-radius:5px;background:#fff;overflow:hidden">
<svg style="left:0;top:-1px" width="148" height="83.2" viewBox="0 0 761 428"><text x="39" y="50" font-family="Liberation Sans" font-size="27" fill="#3A3A3A" textLength="440" lengthAdjust="spacingAndGlyphs">5 Conflict Resolution Strategies Model</text><g transform="translate(-235.3 52.3) scale(0.868)"><path d="M351 24.3 L383.6 56.6 H373.7 V336 H328.5 V56.6 H318.2 Z" fill="#F2F2F2"/><path d="M392 348.6 H671.8 V338.4 L704 371 L671.8 403.6 V393 H392 Z" fill="#F2F2F2"/><rect x="392" y="63" width="135.6" height="135.5" fill="#F3F3F3"/><rect x="527.6" y="63" width="136.4" height="135.5" fill="#EDEDED"/><rect x="392" y="198.5" width="135.6" height="135.5" fill="#EDEDED"/><rect x="527.6" y="198.5" width="136.4" height="135.5" fill="#F3F3F3"/><rect x="463.5" y="134" width="128.5" height="126.7" fill="#D5D5D5"/><circle cx="463" cy="136" r="32" fill="#000" opacity="0.12"/><circle cx="460" cy="131" r="31" fill="#A8A8A8"/><circle cx="598.5" cy="136" r="32" fill="#000" opacity="0.12"/><circle cx="595.5" cy="131" r="31" fill="#A8A8A8"/><circle cx="463" cy="271.5" r="32" fill="#000" opacity="0.12"/><circle cx="460" cy="266.5" r="31" fill="#A8A8A8"/><circle cx="598.5" cy="271.5" r="32" fill="#000" opacity="0.12"/><circle cx="595.5" cy="266.5" r="31" fill="#A8A8A8"/><circle cx="530" cy="182" r="32" fill="#000" opacity="0.12"/><circle cx="527" cy="177" r="31" fill="#2E7FAF"/><g transform="translate(-291 -226)">
<g fill="#fff">
<path d="M743.2 343.9 H758.9 V351.5 Q758.9 357.3 753.2 359.4 V364 H757.1 V369.9 H745.1 V364 H748.9 V359.4 Q743.2 357.3 743.2 351.5 Z"/>
<rect x="748" y="365.1" width="5.9" height="2.8" fill="#A8A8A8"/>
</g>
<g fill="none" stroke="#fff" stroke-width="1.4">
<path d="M743.4 346.2 C735.2 343.6 734.8 352.6 743.6 354.6 M742.6 355.3 Q740.2 356.2 741.8 357.6"/>
<path d="M758.7 346.2 C766.9 343.6 767.3 352.6 758.5 354.6 M759.5 355.3 Q761.9 356.2 760.3 357.6"/>
</g>

<g fill="#fff"><g transform="translate(887 366.3)"><path d="M-3.3 -0.6 H6.1 V4.6 Q6.1 9.2 1.6 9.2 Q-1.4 9.2 -2.9 6.6 L-6.9 1.9 Q-7 0.7 -5.8 0.9 L-3.3 3 Z"/><rect x="-3.2" y="-7.4" width="1.9" height="7.4" rx="0.9"/><rect x="-0.5" y="-9.2" width="1.9" height="9.2" rx="0.9"/><rect x="2.2" y="-8.4" width="1.9" height="8.4" rx="0.9"/><rect x="4.3" y="-5.3" width="1.8" height="5.3" rx="0.9"/></g><g transform="translate(876.8 347.6) rotate(135)"><path d="M-3.3 -0.6 H6.1 V4.6 Q6.1 9.2 1.6 9.2 Q-1.4 9.2 -2.9 6.6 L-6.9 1.9 Q-7 0.7 -5.8 0.9 L-3.3 3 Z"/><rect x="-3.2" y="-7.4" width="1.9" height="7.4" rx="0.9"/><rect x="-0.5" y="-9.2" width="1.9" height="9.2" rx="0.9"/><rect x="2.2" y="-8.4" width="1.9" height="8.4" rx="0.9"/><rect x="4.3" y="-5.3" width="1.8" height="5.3" rx="0.9"/></g><g transform="translate(897.6 347.2) rotate(-135)"><path d="M-3.3 -0.6 H6.1 V4.6 Q6.1 9.2 1.6 9.2 Q-1.4 9.2 -2.9 6.6 L-6.9 1.9 Q-7 0.7 -5.8 0.9 L-3.3 3 Z"/><rect x="-3.2" y="-7.4" width="1.9" height="7.4" rx="0.9"/><rect x="-0.5" y="-9.2" width="1.9" height="9.2" rx="0.9"/><rect x="2.2" y="-8.4" width="1.9" height="8.4" rx="0.9"/><rect x="4.3" y="-5.3" width="1.8" height="5.3" rx="0.9"/></g></g>
<g fill="#fff">
<path d="M799.15 399.7 L809.2 389.9 L813.8 393.9 L817 394.6 L819.2 394.4 L824.4 389.9 L833.9 399.7 L829.4 404.8 L830.9 409.2 L817 420.6 L804.2 411.4 L803.6 407.2 Z"/>
</g>
<g fill="none" stroke="#A8A8A8" stroke-width="1.2" stroke-linecap="round">
<path d="M803.9 407.4 L811.2 400.2 M829.2 404.9 L825.4 401.2"/>
<path d="M807.8 397.2 L810.4 400 Q813.6 396.2 817 397 L820.4 398.4 Q822.8 400 821.4 401.9 Q820.2 403 818.2 402"/>
<path d="M805.4 411.2 L811.4 404.6 M808.4 413.8 L813.2 408.4 M811.4 416.4 L814.8 412.6 M814.2 418.8 L816 416.8"/>
<path d="M818.8 405.4 L824.4 411 M817 408.6 L821.8 413.4 M816.2 412.2 L819.2 415.2"/>
</g>
<path fill="#fff" fill-rule="evenodd" d="M742.2 481 H760 L764.9 495.4 V504 H737 V495.4 Z M743.9 482.8 H758.3 L762.1 495.1 H754.6 V497.7 H747.4 V495.1 H740.1 Z"/>
<rect x="746.4" y="480" width="9.4" height="3.4" fill="#A8A8A8"/>
<path fill="#fff" d="M748.5 481 H753.7 V488.5 H756.9 L751.1 494.8 L745.1 488.5 H748.5 Z"/>
<path d="M872.6 505.2 L882.4 478.7" stroke="#fff" stroke-width="1.7" stroke-linecap="round"/>
<path fill="#fff" d="M882.4 478.7 Q886 482.8 891.8 481.6 Q897.2 480.6 900.5 483.9 L895.6 499.4 Q891.2 495.6 885.8 497 Q880.5 498.5 877.8 496 Z"/>
<path fill="#A8A8A8" d="M884.6 482.6 L887.4 482.9 L886.3 486.0 L883.5 485.7ZM882.4 488.7 L885.3 489.0 L884.2 492.1 L881.3 491.8ZM886.3 486.0 L889.2 486.3 L888.1 489.4 L885.3 489.0ZM884.2 492.1 L887.0 492.5 L886.0 495.5 L883.1 495.2ZM890.3 483.2 L893.1 483.6 L892.0 486.6 L889.2 486.3ZM888.1 489.4 L891.0 489.7 L889.9 492.8 L887.0 492.5ZM892.0 486.6 L894.9 487.0 L893.8 490.1 L891.0 489.7ZM889.9 492.8 L892.8 493.2 L891.7 496.2 L888.8 495.9ZM896.0 483.9 L898.8 484.2 L897.7 487.3 L894.9 487.0ZM893.8 490.1 L896.7 490.4 L895.7 493.5 L892.8 493.2Z"/>
</g><rect x="429.0" y="88" width="62" height="8" fill="#9A9A9A" opacity="0.55"/><rect x="545.5" y="88" width="100" height="8" fill="#9A9A9A" opacity="0.55"/><rect x="479.70000000000005" y="224" width="96" height="8" fill="#2E7FAF" opacity="0.55"/><rect x="420.0" y="318" width="80" height="8" fill="#9A9A9A" opacity="0.55"/><rect x="562.5" y="318" width="66" height="8" fill="#9A9A9A" opacity="0.55"/><rect x="345" y="60" width="10" height="26" fill="#BBBBBB" opacity="0.8"/><rect x="340" y="172" width="10" height="48" fill="#BBBBBB" opacity="0.8"/><rect x="354" y="175" width="10" height="42" fill="#BBBBBB" opacity="0.8"/><rect x="345" y="292" width="10" height="26" fill="#BBBBBB" opacity="0.8"/><rect x="408" y="364" width="24" height="10" fill="#BBBBBB" opacity="0.8"/><rect x="503" y="358" width="50" height="10" fill="#BBBBBB" opacity="0.8"/><rect x="498" y="373" width="60" height="10" fill="#BBBBBB" opacity="0.8"/><rect x="631" y="364" width="28" height="10" fill="#BBBBBB" opacity="0.8"/></g><rect x="378" y="107" width="340" height="237" fill="#EFEFEF"/><defs><linearGradient id="bg_comp" x1="0" x2="1"><stop offset="0" stop-color="#2677A8"/><stop offset="1" stop-color="#2677A8" stop-opacity="0.7"/></linearGradient></defs><path d="M378 122 H686 L668 158 H378 Z" fill="url(#bg_comp)"/><text x="392" y="150" font-family="Liberation Sans" font-weight="700" font-size="17" fill="#fff">COMPROMISE</text><rect x="392" y="181" width="290" height="6" fill="#6A6A6A" opacity="0.45"/><rect x="392" y="193" width="295" height="6" fill="#6A6A6A" opacity="0.45"/><rect x="392" y="205" width="55" height="6" fill="#6A6A6A" opacity="0.45"/></svg>
</div>
<div class="a" style="left:36px;top:439.5px;width:149px;height:85px;border:1px solid #BDBDBD;border-radius:5px;background:#fff;overflow:hidden">
<svg style="left:0;top:0" width="148" height="83.2" viewBox="0 0 761 428"><text x="39" y="50" font-family="Liberation Sans" font-size="27" fill="#3A3A3A" textLength="440" lengthAdjust="spacingAndGlyphs">5 Conflict Resolution Strategies Model</text><path d="M351 60 L383.6 92 H318.2 Z" fill="#F2F2F2"/></svg>
</div>
</div>
<div class="a" style="left:206px;top:215px;width:17px;height:457px;background:#F6F6F6;border-radius:8px"></div>
<svg style="left:209px;top:218px" width="11" height="9" viewBox="0 0 11 9"><path d="M1 8 L5.5 1.5 L10 8 Z" fill="#717171" stroke="#717171" stroke-width="1" stroke-linejoin="round"/></svg>
<div class="a" style="left:210px;top:231px;width:9px;height:254px;background:#717171;border-radius:4.5px"></div>
<svg style="left:209px;top:660px" width="11" height="9" viewBox="0 0 11 9"><path d="M1 1 L5.5 7.5 L10 1 Z" fill="#717171" stroke="#717171" stroke-width="1" stroke-linejoin="round"/></svg>
<div class="a" style="left:1114px;top:215px;width:16px;height:400px;background:#F6F6F6;border-radius:8px"></div>
<svg style="left:1117.5px;top:218px" width="10" height="8" viewBox="0 0 10 8"><path d="M1 7.5 L5 1 L9 7.5 Z" fill="#717171" stroke="#717171" stroke-width="1" stroke-linejoin="round"/></svg>
<div class="a" style="left:1118.3px;top:231px;width:8.7px;height:52px;background:#717171;border-radius:4.3px"></div>
<svg style="left:1117.5px;top:604px" width="10" height="8" viewBox="0 0 10 8"><path d="M1 1 L5 7 L9 1 Z" fill="#717171" stroke="#717171" stroke-width="1" stroke-linejoin="round"/></svg>
<svg style="left:1117.5px;top:617px" width="10" height="13" viewBox="0 0 10 13"><path d="M1 6.5 L5 1 L9 6.5 Z M1 12.5 L5 7 L9 12.5 Z" fill="#717171" stroke="#717171" stroke-width="1" stroke-linejoin="round"/></svg>
<svg style="left:1117.5px;top:634px" width="10" height="13" viewBox="0 0 10 13"><path d="M1 1 L5 6.5 L9 1 Z M1 7 L5 12.5 L9 7 Z" fill="#717171" stroke="#717171" stroke-width="1" stroke-linejoin="round"/></svg>
<div class="a" style="left:229px;top:670px;width:902px;height:1px;background:#D2D2D2"></div>
<div class="a" style="left:1px;top:673px;width:1130px;height:22px;background:#F3F3F3;border-top:1px solid #CFCFCF"></div>
<div class="t" style="left:9px;top:678.5px;font-size:12px;color:#262626;transform:scaleX(0.94);transform-origin:0 0">Slide 1 of 7</div>
<div class="t" style="left:98px;top:678.5px;font-size:12px;color:#262626;transform:scaleX(0.95);transform-origin:0 0">English (United States)</div>
<svg style="left:226px;top:672px" width="24" height="24" viewBox="0 0 24 24"><circle cx="10.9" cy="7.1" r="1.9" fill="none" stroke="#1A1A1A" stroke-width="1.1"/><path d="M9.2 9.9 Q5.6 10.3 5.3 8.7 Q5.3 7.3 7 7.6 L9.2 8.8 H12.6 L14.8 7.6 Q16.6 7.3 16.6 8.7 Q16.4 9.9 13.8 10.4 M9.2 9.9 L8.5 14.8 Q7.8 18.6 8.6 18.6 Q9.7 18.7 10.2 16.6 L10.9 14.9" fill="none" stroke="#1A1A1A" stroke-width="1.1" stroke-linejoin="round"/><path d="M12.4 12.4 L18.6 18.6 M18.6 12.4 L12.4 18.6" stroke="#1A1A1A" stroke-width="1"/></svg>
<div class="t" style="left:249px;top:678.5px;font-size:12px;color:#262626;transform:scaleX(0.94);transform-origin:0 0">Accessibility: Investigate</div>
<svg style="left:695px;top:677px" width="16" height="15" viewBox="0 0 16 15"><path d="M5 4 L8 1 L11 4" fill="none" stroke="#3A3A3A" stroke-width="1"/><path d="M0.5 7 H15.5 M0.5 10.5 H15.5 M0.5 14 H15.5" stroke="#3A3A3A" stroke-width="1"/></svg>
<div class="t" style="left:713px;top:678.5px;font-size:12px;color:#262626">Notes</div>
<div class="a" style="left:762px;top:674px;width:40px;height:21px;background:#DADADA"></div>
<svg style="left:775px;top:678px" width="15" height="13" viewBox="0 0 15 13"><rect x="0.5" y="0.5" width="14" height="12" fill="none" stroke="#3A3A3A" stroke-width="1"/><path d="M3.5 0.5 V12.5 M5.5 3 H12 V9 H5.5 Z" fill="none" stroke="#3A3A3A" stroke-width="1"/></svg>
<svg style="left:815px;top:678px" width="14" height="13" viewBox="0 0 14 13"><rect x="0.5" y="0.5" width="5" height="4.5" fill="none" stroke="#3A3A3A" stroke-width="1"/><rect x="8.5" y="0.5" width="5" height="4.5" fill="none" stroke="#3A3A3A" stroke-width="1"/><rect x="0.5" y="8" width="5" height="4.5" fill="none" stroke="#3A3A3A" stroke-width="1"/><rect x="8.5" y="8" width="5" height="4.5" fill="none" stroke="#3A3A3A" stroke-width="1"/></svg>
<svg style="left:855px;top:678px" width="14" height="13" viewBox="0 0 14 13"><path d="M0.5 1 H5.5 Q7 1 7 2.5 Q7 1 8.5 1 H13.5 V12 H8.5 Q7 12 7 12.5 Q7 12 5.5 12 H0.5 Z M7 2.5 V12" fill="none" stroke="#3A3A3A" stroke-width="1"/><path d="M2 4 H5 M2 6.5 H5 M2 9 H5 M9 4 H12 M9 6.5 H12 M9 9 H12" stroke="#3A3A3A" stroke-width="0.8"/></svg>
<svg style="left:895px;top:677px" width="13" height="15" viewBox="0 0 13 15"><path d="M0.5 1 H12.5 M1.5 1 V8.5 H11.5 V1 M6.5 8.5 V11 M6.5 11 L3.5 14.5 M6.5 11 L9.5 14.5" fill="none" stroke="#3A3A3A" stroke-width="1"/></svg>
<div class="a" style="left:928px;top:684px;width:8px;height:1px;background:#3A3A3A"></div>
<div class="a" style="left:942px;top:684px;width:100px;height:1px;background:#6A6A6A"></div>
<div class="a" style="left:991px;top:681px;width:1px;height:7px;background:#6A6A6A"></div>
<div class="a" style="left:968px;top:679px;width:5.5px;height:11px;background:#555"></div>
<div class="a" style="left:1045.5px;top:684px;width:9px;height:1px;background:#3A3A3A"></div><div class="a" style="left:1049.5px;top:680px;width:1px;height:9px;background:#3A3A3A"></div>
<div class="t" style="left:1066px;top:678.5px;font-size:12px;color:#262626;letter-spacing:-0.3px">60%</div>
<svg style="left:1100px;top:676px" width="16" height="16" viewBox="0 0 16 16"><rect x="5" y="5" width="6" height="6" fill="none" stroke="#242424" stroke-width="1"/><path d="M6 2.5 L8 0.8 L10 2.5 M6 13.5 L8 15.2 L10 13.5 M2.5 6 L0.8 8 L2.5 10 M13.5 6 L15.2 8 L13.5 10" fill="none" stroke="#242424" stroke-width="1"/></svg>
</div></body></html>
